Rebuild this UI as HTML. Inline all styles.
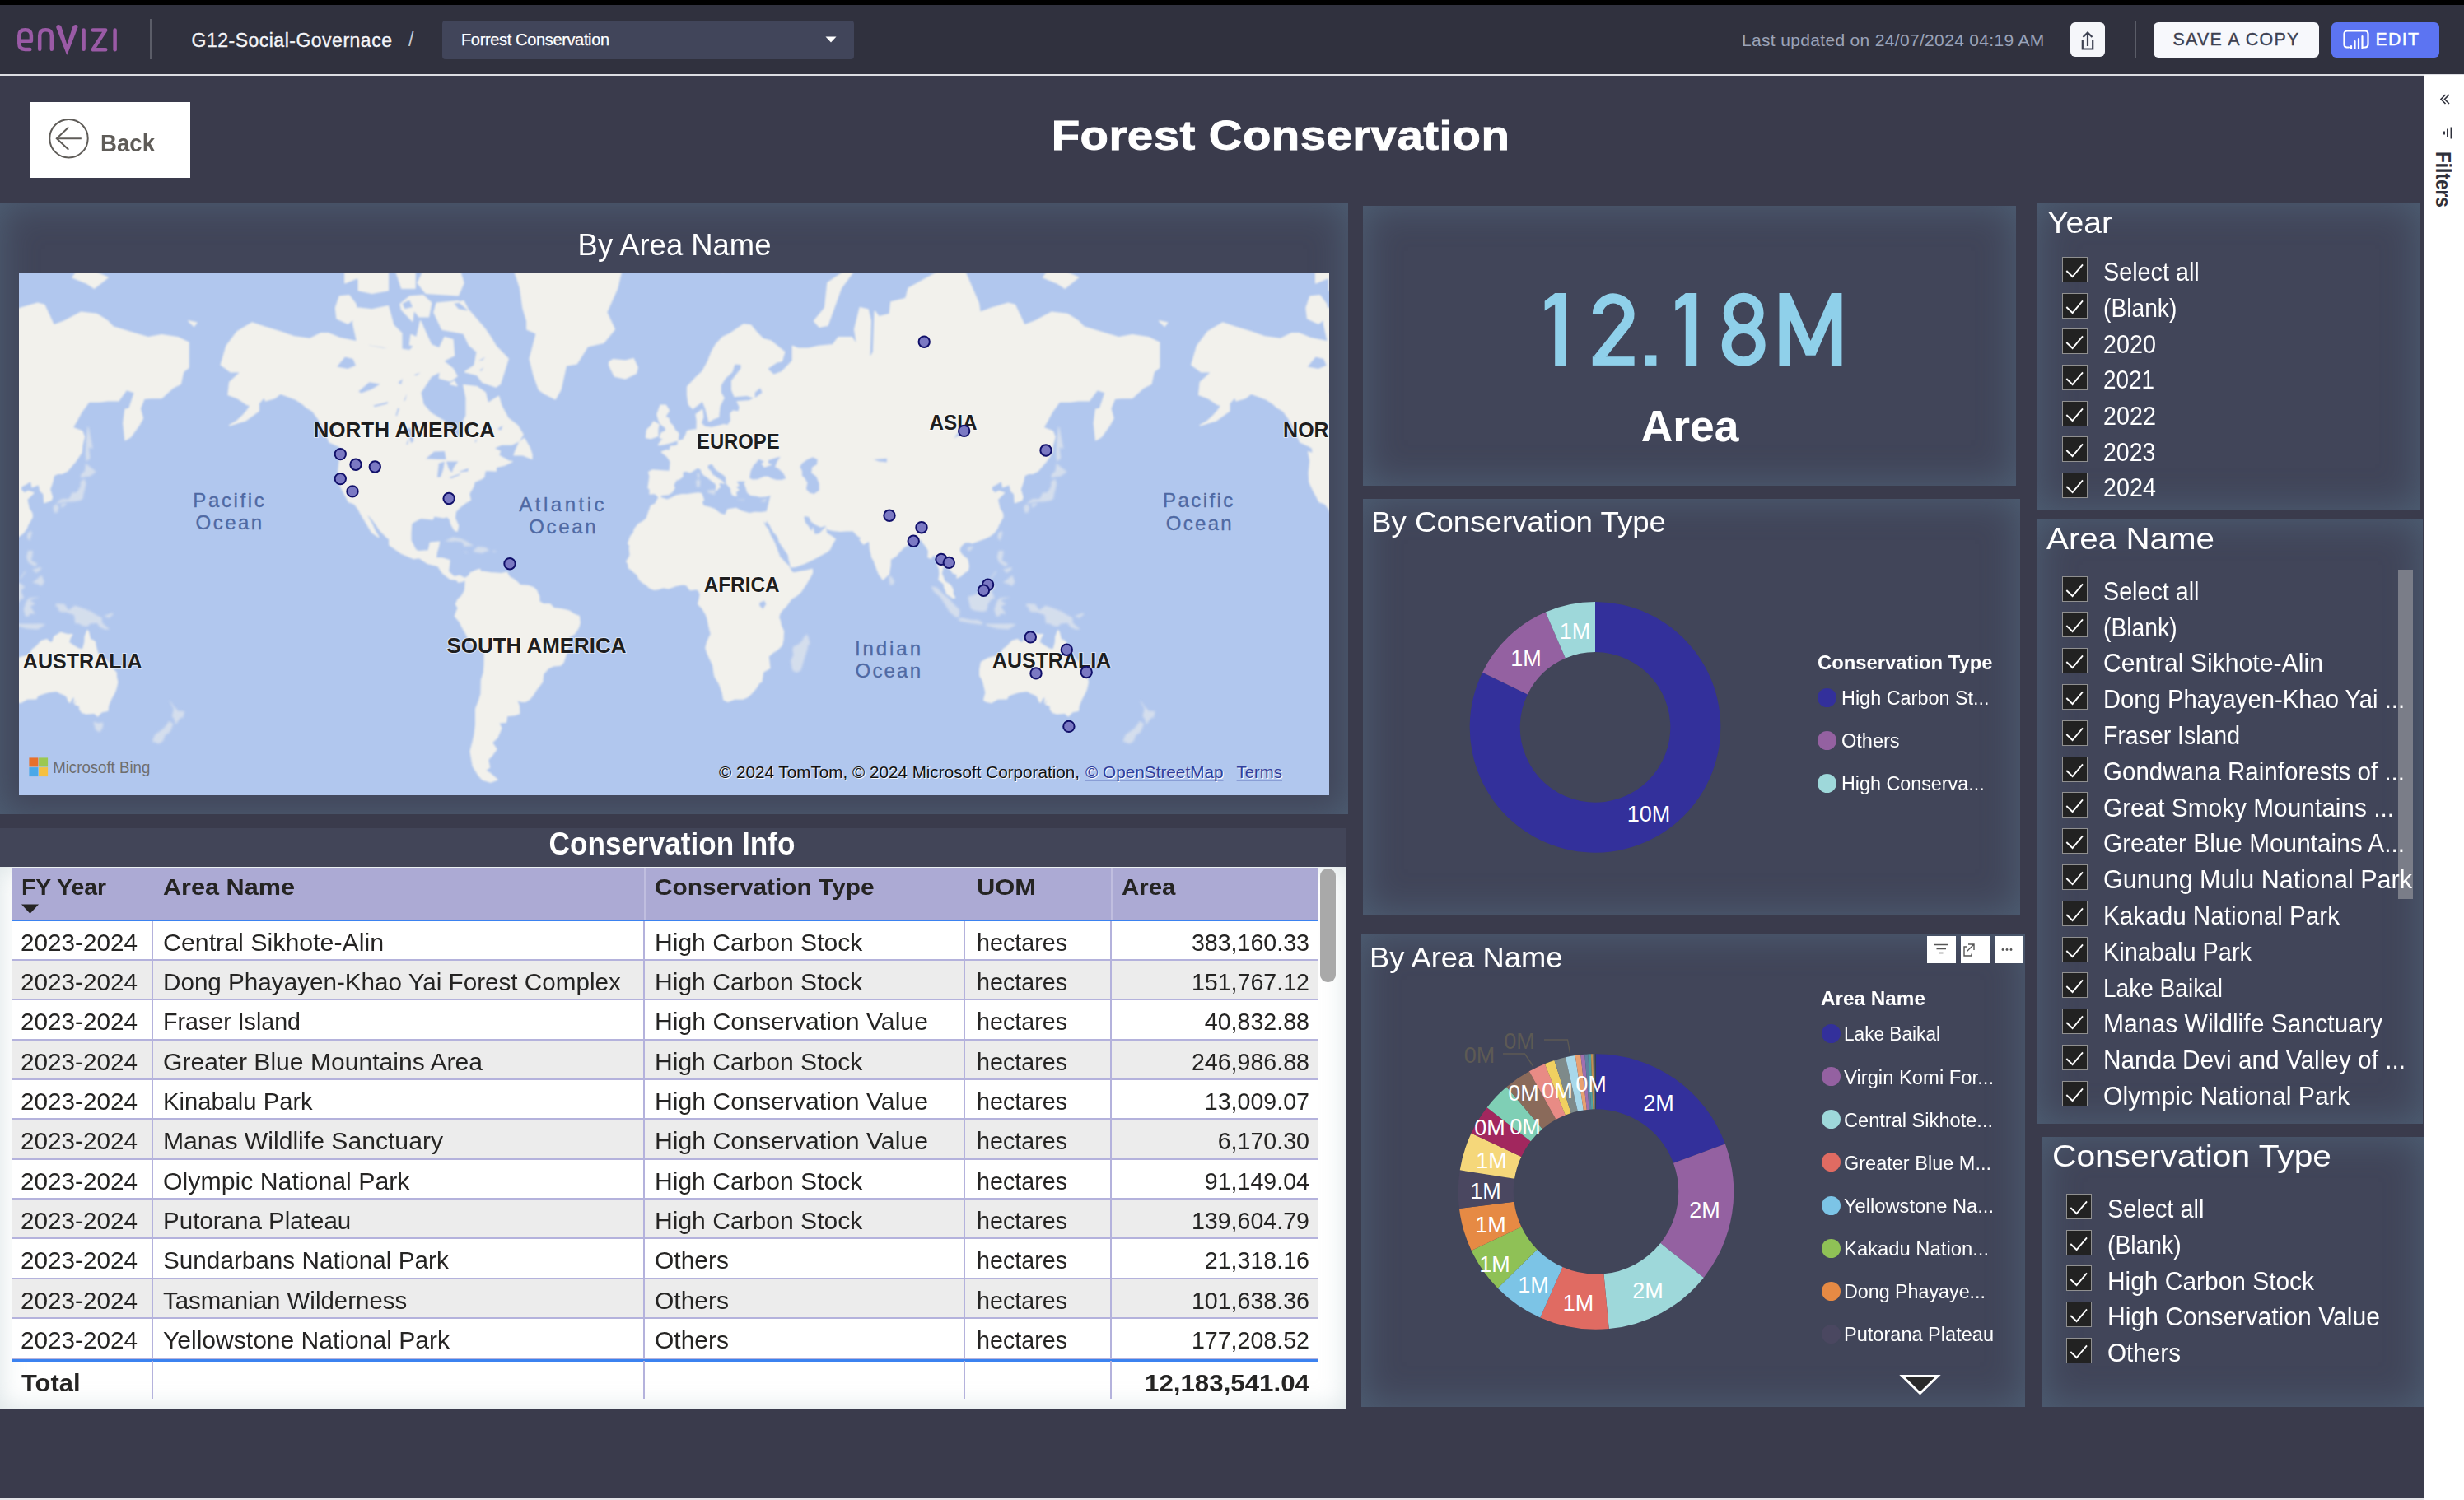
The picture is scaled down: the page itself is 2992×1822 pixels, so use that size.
<!DOCTYPE html>
<html><head><meta charset="utf-8">
<style>
*{box-sizing:border-box;margin:0;padding:0}
html,body{width:2992px;height:1822px;overflow:hidden;background:#3a3b4c;font-family:"Liberation Sans",sans-serif;position:relative}
.a{position:absolute}
.t{position:absolute;white-space:nowrap;line-height:1}
.cb{position:absolute;width:31px;height:31px;background:#222;border:1px solid #909090}

</style></head>
<body>
<div class="a" style="left:0px;top:0px;width:2992px;height:6px;background:#000;"></div>
<div class="a" style="left:0px;top:6px;width:2992px;height:84px;background:#30313e;"></div>
<div class="a" style="left:0px;top:90px;width:2992px;height:1.5px;background:#dcdde2;"></div>
<svg class="a" style="left:0;top:0" width="160" height="90" viewBox="0 0 160 90">
<g fill="none" stroke="#9a5aa6" stroke-width="4.5" stroke-linecap="round" stroke-linejoin="round">
<path d="M23.3,49.8 H37.9 V43.4 Q37.9,36.3 30.8,36.3 H30.4 Q23.3,36.3 23.3,43.4 V52.8 Q23.3,59.9 30.4,59.9 H36.3"/>
<path d="M48.2,59.8 V43.4 Q48.2,36.3 55.3,36.3 H55.7 Q62.8,36.3 62.8,43.4 V59.8"/>
<path d="M101.6,36.6 V59.8"/>
<path d="M112.8,36.6 H128.2 L112.8,60.3 H128.2"/>
<path d="M139.6,36.6 V60.3"/>
</g>
<path fill="#9a5aa6" d="M68.3,33.5 Q68,30 71.2,30 Q73.8,30 74.6,32.5 L81.3,54 L88.2,32.5 Q89,30 91.6,30 Q95,30 94.4,33.5 L81.6,66.6 L81,66.6 Z"/>
</svg>
<div class="a" style="left:182px;top:23px;width:2px;height:49px;background:#5b5d68;"></div>
<div class="t" style="top:37.53px;font-size:23px;color:#f4f5f8;font-weight:400;letter-spacing:0.5px;left:232.50px;-webkit-text-stroke:0.35px #f4f5f8;">G12-Social-Governace</div>
<div class="t" style="top:36.93px;font-size:23px;color:#c8cad2;font-weight:400;left:496.00px;">/</div>
<div class="a" style="left:537px;top:25px;width:500px;height:47px;background:#41455a;border-radius:4px"></div>
<div class="t" style="top:37.77px;font-size:20px;color:#fff;font-weight:400;letter-spacing:-0.35px;left:560.00px;-webkit-text-stroke:0.25px #fff;">Forrest Conservation</div>
<svg class="a" style="left:1000px;top:43px" width="18" height="10"><path d="M2.5,1.5 H15.5 L9,8.5Z" fill="#fff"/></svg>
<div class="t" style="top:37.62px;font-size:21px;color:#9ba3b8;font-weight:400;letter-spacing:0.33px;left:2115.00px;">Last updated on 24/07/2024 04:19 AM</div>
<div class="a" style="left:2514px;top:27px;width:42px;height:42px;background:#f5f6fa;border-radius:6px"></div>
<svg class="a" style="left:2514px;top:27px" width="42" height="42"><g fill="none" stroke="#3d4152" stroke-width="2.2">
<path d="M14.8,22 V32.5 H27.2 V22"/><path d="M21,29 V12.5 M15.5,18 L21,12.5 L26.5,18"/></g></svg>
<div class="a" style="left:2592px;top:26px;width:2px;height:44px;background:#5b5d68;"></div>
<div class="a" style="left:2615px;top:27px;width:201px;height:43px;background:#f7f8fc;border-radius:6px"></div>
<div class="t" style="top:38.28px;font-size:21.4px;color:#3d4152;font-weight:400;letter-spacing:1.3px;left:1715.50px;width:2000px;text-align:center;-webkit-text-stroke:0.35px #3d4152;">SAVE A COPY</div>
<div class="a" style="left:2831px;top:27px;width:131px;height:43px;background:#5c74f2;border-radius:6px"></div>
<svg class="a" style="left:2844px;top:35px" width="36" height="28"><g fill="none" stroke="#fff" stroke-width="2.2" stroke-linecap="round">
<path d="M8,22.5 H5.5 A3.5,3.5 0 0 1 2.5,19 V6 A3.5,3.5 0 0 1 6,2.5 H28 A3.5,3.5 0 0 1 31.5,6 V19 A3.5,3.5 0 0 1 28,22.5 H26"/>
<path d="M11,24 V21 M15.5,24 V15 M20,24 V12 M24.5,24 V9"/></g></svg>
<div class="t" style="top:38.28px;font-size:21.4px;color:#fff;font-weight:400;letter-spacing:1.3px;left:2884.50px;-webkit-text-stroke:0.35px #fff;">EDIT</div>
<div class="a" style="left:2943px;top:91px;width:49px;height:1731px;background:#fff;border-left:1px solid #c9cad0"></div>
<svg class="a" style="left:2943px;top:91px" width="49" height="180"><g fill="none" stroke="#2e303b" stroke-width="1.6">
<path d="M26.5,24 L21,29.5 L26.5,35 M31,24 L25.5,29.5 L31,35"/>
<path d="M33.5,63.5 V77.5 M29,65.5 V75 M25,68.5 V72.5" stroke-width="1.9"/></g></svg>
<div class="t" style="left:2948px;top:184px;font-size:25px;font-weight:700;color:#2e303b;transform-origin:0 0;transform:translate(31px,0) rotate(90deg) scaleX(0.905)">Filters</div>
<div class="a" style="left:0px;top:1820px;width:2943px;height:2px;background:#e4e4e8;"></div>
<div class="a" style="left:37px;top:124px;width:194px;height:92px;background:#fff;"></div>
<svg class="a" style="left:37px;top:124px" width="194" height="92"><g fill="none" stroke="#5f5c58" stroke-width="2">
<circle cx="46.5" cy="44.2" r="23.2"/><path d="M31.8,44.2 H61.8 M46.3,30.6 L31.8,44.2 L46.3,57.8"/></g></svg>
<div class="t" style="top:158.60px;font-size:30px;color:#5f5c58;font-weight:700;left:122.30px;transform:scaleX(0.92);transform-origin:0 0;">Back</div>
<div class="t" style="top:139.88px;font-size:50.7px;color:#fff;font-weight:700;letter-spacing:0.4px;left:555.00px;width:2000px;text-align:center;transform:scaleX(1.112);transform-origin:50% 0;-webkit-text-stroke:0.9px #fff;">Forest Conservation</div>
<div class="a" style="left:0px;top:247px;width:1637px;height:742px;background:#414559;box-shadow:inset 0 0 46px rgba(95,128,150,.48)"></div>
<div class="t" style="top:279.18px;font-size:37px;color:#fff;font-weight:400;left:-180.80px;width:2000px;text-align:center;transform:scaleX(0.9842);transform-origin:50% 0;">By Area Name</div>
<svg class="a" style="left:23px;top:331px" width="1591" height="635" viewBox="0 0 1591 635">
<defs><filter id="bl" x="-2%" y="-2%" width="104%" height="104%"><feGaussianBlur stdDeviation="1.1"/></filter><filter id="bl2" x="-2%" y="-2%" width="104%" height="104%"><feGaussianBlur stdDeviation="1.8"/></filter></defs>
<rect width="1591" height="635" fill="#b1c7ee"/>
<g filter="url(#bl)">
<path d="M-933.3,112.2 L-926.8,89.6 L-913.7,72.0 L-895.7,61.1 L-880.9,66.1 L-861.3,72.0 L-844.9,77.7 L-825.3,80.5 L-812.2,73.9 L-802.4,73.9 L-789.3,79.6 L-766.4,84.2 L-753.3,89.6 L-736.9,92.2 L-720.5,92.2 L-704.2,94.8 L-697.6,87.8 L-691.1,59.0 L-684.5,73.9 L-678.0,87.8 L-668.1,92.2 L-661.6,78.7 L-651.8,81.5 L-650.1,100.8 L-661.6,106.6 L-668.1,120.7 L-678.0,126.0 L-691.1,145.8 L-687.8,160.2 L-678.0,171.3 L-661.6,181.2 L-652.8,194.7 L-641.9,202.1 L-641.9,185.8 L-635.4,174.2 L-635.4,152.4 L-638.7,136.8 L-622.3,138.9 L-612.5,145.8 L-609.2,158.9 L-596.1,150.5 L-592.8,162.0 L-584.7,177.2 L-573.2,185.8 L-566.6,196.8 L-571.6,204.7 L-579.7,208.9 L-592.8,208.9 L-602.7,213.4 L-594.5,216.9 L-596.1,222.3 L-583.0,229.5 L-579.7,229.5 L-589.6,234.2 L-599.4,236.5 L-599.4,241.0 L-612.5,240.1 L-614.1,248.6 L-617.4,250.8 L-625.6,254.2 L-627.2,260.6 L-632.1,268.9 L-630.5,276.2 L-635.4,279.0 L-641.9,283.8 L-648.5,290.7 L-649.5,298.3 L-645.2,307.6 L-646.5,314.2 L-649.5,313.1 L-653.7,305.8 L-655.0,300.2 L-658.3,296.5 L-663.2,297.6 L-674.7,295.7 L-676.3,299.8 L-681.2,299.1 L-691.1,298.3 L-700.9,303.9 L-702.2,305.8 L-702.8,316.7 L-702.8,325.6 L-697.0,337.2 L-692.7,338.9 L-681.2,337.8 L-679.3,328.4 L-668.1,327.4 L-669.8,334.4 L-671.4,339.6 L-672.4,347.1 L-664.9,347.1 L-655.7,349.8 L-656.7,358.2 L-657.3,363.3 L-650.1,369.9 L-643.6,368.3 L-637.0,371.6 L-639.3,374.9 L-645.2,375.9 L-646.9,373.2 L-655.0,372.2 L-664.2,364.9 L-669.8,356.6 L-682.9,353.2 L-692.7,346.4 L-699.2,347.4 L-714.0,341.3 L-728.7,330.9 L-728.7,323.9 L-732.0,321.4 L-740.2,313.1 L-745.1,305.8 L-750.6,298.3 L-759.2,289.6 L-753.3,300.2 L-750.0,305.8 L-746.7,313.1 L-741.8,321.4 L-745.1,319.2 L-750.0,315.6 L-756.5,304.7 L-762.4,294.9 L-766.7,286.9 L-771.3,281.0 L-778.1,278.6 L-782.1,271.0 L-784.4,266.9 L-788.6,258.5 L-790.3,254.7 L-790.9,243.3 L-789.3,228.5 L-791.6,217.9 L-786.0,219.9 L-786.7,213.4 L-792.6,209.9 L-801.7,205.8 L-802.4,203.7 L-810.6,185.8 L-815.5,177.2 L-822.0,168.2 L-830.2,163.3 L-833.5,160.2 L-843.3,153.7 L-861.3,147.1 L-867.9,152.4 L-879.3,155.7 L-880.9,149.1 L-874.4,144.4 L-887.5,158.9 L-887.5,168.2 L-895.7,174.2 L-903.9,180.1 L-910.4,181.8 L-922.9,185.8 L-913.7,180.1 L-907.1,174.2 L-900.6,166.4 L-897.3,161.4 L-902.2,160.2 L-913.7,152.4 L-924.5,148.5 L-922.9,133.3 L-910.4,122.2 L-910.4,120.7 L-921.9,120.7 L-926.8,116.9 L-933.3,112.2Z M245.3,112.2 L251.9,89.6 L265.0,72.0 L283.0,61.1 L297.7,66.1 L317.3,72.0 L333.7,77.7 L353.3,80.5 L366.4,73.9 L376.3,73.9 L389.4,79.6 L412.3,84.2 L425.4,89.6 L441.7,92.2 L458.1,92.2 L474.5,94.8 L481.0,87.8 L487.6,59.0 L494.1,73.9 L500.7,87.8 L510.5,92.2 L517.0,78.7 L526.9,81.5 L528.5,100.8 L517.0,106.6 L510.5,120.7 L500.7,126.0 L487.6,145.8 L490.9,160.2 L500.7,171.3 L517.0,181.2 L525.9,194.7 L536.7,202.1 L536.7,185.8 L543.2,174.2 L543.2,152.4 L540.0,136.8 L556.3,138.9 L566.2,145.8 L569.4,158.9 L582.5,150.5 L585.8,162.0 L594.0,177.2 L605.4,185.8 L612.0,196.8 L607.1,204.7 L598.9,208.9 L585.8,208.9 L576.0,213.4 L584.2,216.9 L582.5,222.3 L595.6,229.5 L598.9,229.5 L589.1,234.2 L579.3,236.5 L579.3,241.0 L566.2,240.1 L564.5,248.6 L561.2,250.8 L553.1,254.2 L551.4,260.6 L546.5,268.9 L548.2,276.2 L543.2,279.0 L536.7,283.8 L530.1,290.7 L529.2,298.3 L533.4,307.6 L532.1,314.2 L529.2,313.1 L524.9,305.8 L523.6,300.2 L520.3,296.5 L515.4,297.6 L504.0,295.7 L502.3,299.8 L497.4,299.1 L487.6,298.3 L477.8,303.9 L476.5,305.8 L475.8,316.7 L475.8,325.6 L481.7,337.2 L485.9,338.9 L497.4,337.8 L499.4,328.4 L510.5,327.4 L508.9,334.4 L507.2,339.6 L506.2,347.1 L513.8,347.1 L522.9,349.8 L522.0,358.2 L521.3,363.3 L528.5,369.9 L535.1,368.3 L541.6,371.6 L539.3,374.9 L533.4,375.9 L531.8,373.2 L523.6,372.2 L514.4,364.9 L508.9,356.6 L495.8,353.2 L485.9,346.4 L479.4,347.4 L464.7,341.3 L449.9,330.9 L449.9,323.9 L446.7,321.4 L438.5,313.1 L433.6,305.8 L428.0,298.3 L419.5,289.6 L425.4,300.2 L428.7,305.8 L431.9,313.1 L436.8,321.4 L433.6,319.2 L428.7,315.6 L422.1,304.7 L416.2,294.9 L412.0,286.9 L407.4,281.0 L400.5,278.6 L396.6,271.0 L394.3,266.9 L390.0,258.5 L388.4,254.7 L387.7,243.3 L389.4,228.5 L387.1,217.9 L392.6,219.9 L392.0,213.4 L386.1,209.9 L376.9,205.8 L376.3,203.7 L368.1,185.8 L363.2,177.2 L356.6,168.2 L348.4,163.3 L345.2,160.2 L335.3,153.7 L317.3,147.1 L310.8,152.4 L299.3,155.7 L297.7,149.1 L304.2,144.4 L291.1,158.9 L291.1,168.2 L283.0,174.2 L274.8,180.1 L268.2,181.8 L255.8,185.8 L265.0,180.1 L271.5,174.2 L278.0,166.4 L281.3,161.4 L276.4,160.2 L265.0,152.4 L254.1,148.5 L255.8,133.3 L268.2,122.2 L268.2,120.7 L256.8,120.7 L251.9,116.9 L245.3,112.2Z M1423.9,112.2 L1430.5,89.6 L1443.6,72.0 L1461.6,61.1 L1476.3,66.1 L1496.0,72.0 L1512.3,77.7 L1532.0,80.5 L1545.1,73.9 L1554.9,73.9 L1568.0,79.6 L1590.9,84.2 L1604.0,89.6 L1620.4,92.2 L1636.8,92.2 L1653.1,94.8 L1659.7,87.8 L1666.2,59.0 L1672.8,73.9 L1679.3,87.8 L1689.1,92.2 L1695.7,78.7 L1705.5,81.5 L1707.1,100.8 L1695.7,106.6 L1689.1,120.7 L1679.3,126.0 L1666.2,145.8 L1669.5,160.2 L1679.3,171.3 L1695.7,181.2 L1704.5,194.7 L1715.3,202.1 L1715.3,185.8 L1721.9,174.2 L1721.9,152.4 L1718.6,136.8 L1735.0,138.9 L1744.8,145.8 L1748.1,158.9 L1761.2,150.5 L1764.4,162.0 L1772.6,177.2 L1784.1,185.8 L1790.6,196.8 L1785.7,204.7 L1777.5,208.9 L1764.4,208.9 L1754.6,213.4 L1762.8,216.9 L1761.2,222.3 L1774.3,229.5 L1777.5,229.5 L1767.7,234.2 L1757.9,236.5 L1757.9,241.0 L1744.8,240.1 L1743.2,248.6 L1739.9,250.8 L1731.7,254.2 L1730.1,260.6 L1725.2,268.9 L1726.8,276.2 L1721.9,279.0 L1715.3,283.8 L1708.8,290.7 L1707.8,298.3 L1712.1,307.6 L1710.7,314.2 L1707.8,313.1 L1703.5,305.8 L1702.2,300.2 L1699.0,296.5 L1694.1,297.6 L1682.6,295.7 L1681.0,299.8 L1676.0,299.1 L1666.2,298.3 L1656.4,303.9 L1655.1,305.8 L1654.4,316.7 L1654.4,325.6 L1660.3,337.2 L1664.6,338.9 L1676.0,337.8 L1678.0,328.4 L1689.1,327.4 L1687.5,334.4 L1685.9,339.6 L1684.9,347.1 L1692.4,347.1 L1701.6,349.8 L1700.6,358.2 L1699.9,363.3 L1707.1,369.9 L1713.7,368.3 L1720.2,371.6 L1718.0,374.9 L1712.1,375.9 L1710.4,373.2 L1702.2,372.2 L1693.1,364.9 L1687.5,356.6 L1674.4,353.2 L1664.6,346.4 L1658.0,347.4 L1643.3,341.3 L1628.6,330.9 L1628.6,323.9 L1625.3,321.4 L1617.1,313.1 L1612.2,305.8 L1606.6,298.3 L1598.1,289.6 L1604.0,300.2 L1607.3,305.8 L1610.6,313.1 L1615.5,321.4 L1612.2,319.2 L1607.3,315.6 L1600.7,304.7 L1594.8,294.9 L1590.6,286.9 L1586.0,281.0 L1579.1,278.6 L1575.2,271.0 L1572.9,266.9 L1568.7,258.5 L1567.0,254.7 L1566.4,243.3 L1568.0,228.5 L1565.7,217.9 L1571.3,219.9 L1570.6,213.4 L1564.7,209.9 L1555.6,205.8 L1554.9,203.7 L1546.7,185.8 L1541.8,177.2 L1535.3,168.2 L1527.1,163.3 L1523.8,160.2 L1514.0,153.7 L1496.0,147.1 L1489.4,152.4 L1478.0,155.7 L1476.3,149.1 L1482.9,144.4 L1469.8,158.9 L1469.8,168.2 L1461.6,174.2 L1453.4,180.1 L1446.9,181.8 L1434.4,185.8 L1443.6,180.1 L1450.1,174.2 L1456.7,166.4 L1460.0,161.4 L1455.1,160.2 L1443.6,152.4 L1432.8,148.5 L1434.4,133.3 L1446.9,122.2 L1446.9,120.7 L1435.4,120.7 L1430.5,116.9 L1423.9,112.2Z M-714.0,45.1 L-700.9,59.0 L-699.2,42.9 L-704.2,32.6 L-715.6,38.4Z M464.7,45.1 L477.8,59.0 L479.4,42.9 L474.5,32.6 L463.0,38.4Z M1643.3,45.1 L1656.4,59.0 L1658.0,42.9 L1653.1,32.6 L1641.7,38.4Z M-704.2,87.8 L-697.6,89.6 L-696.0,78.7 L-702.5,75.8Z M474.5,87.8 L481.0,89.6 L482.7,78.7 L476.1,75.8Z M1653.1,87.8 L1659.7,89.6 L1661.3,78.7 L1654.8,75.8Z M-645.2,0.6 L-678.0,1.9 L-700.9,-8.0 L-678.0,-57.5 L-628.9,-57.5Z M533.4,0.6 L500.7,1.9 L477.8,-8.0 L500.7,-57.5 L549.8,-57.5Z M1712.1,0.6 L1679.3,1.9 L1656.4,-8.0 L1679.3,-57.5 L1728.4,-57.5Z M-694.3,-31.2 L-671.4,-23.1 L-661.6,-57.5 L-694.3,-77.4Z M484.3,-31.2 L507.2,-23.1 L517.0,-57.5 L484.3,-77.4Z M1662.9,-31.2 L1685.9,-23.1 L1695.7,-57.5 L1662.9,-77.4Z M-736.9,-15.4 L-750.0,-16.9 L-727.1,-31.2Z M441.7,-15.4 L428.7,-16.9 L451.6,-31.2Z M1620.4,-15.4 L1607.3,-16.9 L1630.2,-31.2Z M-759.8,3.3 L-782.7,12.7 L-782.7,-8.0 L-759.8,-15.4Z M418.8,3.3 L395.9,12.7 L395.9,-8.0 L418.8,-15.4Z M1597.5,3.3 L1574.6,12.7 L1574.6,-8.0 L1597.5,-15.4Z M-645.2,45.1 L-632.1,47.3 L-638.7,34.9 L-651.8,37.2Z M533.4,45.1 L546.5,47.3 L540.0,34.9 L526.9,37.2Z M1712.1,45.1 L1725.2,47.3 L1718.6,34.9 L1705.5,37.2Z M-655.0,135.4 L-646.9,137.5 L-650.1,131.8Z M523.6,135.4 L531.8,137.5 L528.5,131.8Z M1702.2,135.4 L1710.4,137.5 L1707.1,131.8Z M-584.7,104.9 L-589.6,120.7 L-594.5,135.4 L-599.4,138.9 L-615.8,133.3 L-622.3,124.5 L-637.0,120.7 L-625.6,113.0 L-622.3,96.5 L-632.1,87.8 L-638.7,73.9 L-664.9,69.1 L-674.7,48.4 L-671.4,37.2 L-645.2,34.9 L-632.1,46.2 L-612.5,69.1 L-605.9,78.7 L-599.4,89.6Z M594.0,104.9 L589.1,120.7 L584.2,135.4 L579.3,138.9 L562.9,133.3 L556.3,124.5 L541.6,120.7 L553.1,113.0 L556.3,96.5 L546.5,87.8 L540.0,73.9 L513.8,69.1 L504.0,48.4 L507.2,37.2 L533.4,34.9 L546.5,46.2 L566.2,69.1 L572.7,78.7 L579.3,89.6Z M1772.6,104.9 L1767.7,120.7 L1762.8,135.4 L1757.9,138.9 L1741.5,133.3 L1735.0,124.5 L1720.2,120.7 L1731.7,113.0 L1735.0,96.5 L1725.2,87.8 L1718.6,73.9 L1692.4,69.1 L1682.6,48.4 L1685.9,37.2 L1712.1,34.9 L1725.2,46.2 L1744.8,69.1 L1751.3,78.7 L1757.9,89.6Z M-768.0,83.3 L-753.3,87.8 L-733.6,90.5 L-714.0,92.2 L-714.0,73.9 L-723.8,64.1 L-730.3,40.7 L-750.0,45.1 L-769.6,42.9 L-772.9,62.1Z M410.6,83.3 L425.4,87.8 L445.0,90.5 L464.7,92.2 L464.7,73.9 L454.8,64.1 L448.3,40.7 L428.7,45.1 L409.0,42.9 L405.7,62.1Z M1589.3,83.3 L1604.0,87.8 L1623.7,90.5 L1643.3,92.2 L1643.3,73.9 L1633.5,64.1 L1626.9,40.7 L1607.3,45.1 L1587.6,42.9 L1584.4,62.1Z M-792.6,55.9 L-779.5,62.1 L-768.0,53.8 L-769.6,38.4 L-777.8,27.8 L-789.3,29.0 L-794.2,42.9Z M386.1,55.9 L399.2,62.1 L410.6,53.8 L409.0,38.4 L400.8,27.8 L389.4,29.0 L384.5,42.9Z M1564.7,55.9 L1577.8,62.1 L1589.3,53.8 L1587.6,38.4 L1579.5,27.8 L1568.0,29.0 L1563.1,42.9Z M-681.2,53.8 L-692.7,53.8 L-700.9,42.9 L-710.7,45.1 L-714.0,37.2 L-704.2,29.0 L-687.8,27.8 L-678.0,37.2Z M497.4,53.8 L485.9,53.8 L477.8,42.9 L467.9,45.1 L464.7,37.2 L474.5,29.0 L490.9,27.8 L500.7,37.2Z M1676.0,53.8 L1664.6,53.8 L1656.4,42.9 L1646.6,45.1 L1643.3,37.2 L1653.1,29.0 L1669.5,27.8 L1679.3,37.2Z M-645.2,27.8 L-684.5,25.3 L-694.3,12.7 L-684.5,-8.0 L-645.2,-8.0 L-638.7,12.7Z M533.4,27.8 L494.1,25.3 L484.3,12.7 L494.1,-8.0 L533.4,-8.0 L540.0,12.7Z M1712.1,27.8 L1672.8,25.3 L1662.9,12.7 L1672.8,-8.0 L1712.1,-8.0 L1718.6,12.7Z M-730.3,21.6 L-750.0,25.3 L-766.4,21.6 L-766.4,-0.8 L-730.3,-0.8Z M448.3,21.6 L428.7,25.3 L412.3,21.6 L412.3,-0.8 L448.3,-0.8Z M1626.9,21.6 L1607.3,25.3 L1590.9,21.6 L1590.9,-0.8 L1626.9,-0.8Z M-697.6,19.1 L-714.0,19.1 L-720.5,-0.8 L-697.6,-0.8Z M481.0,19.1 L464.7,19.1 L458.1,-0.8 L481.0,-0.8Z M1659.7,19.1 L1643.3,19.1 L1636.8,-0.8 L1659.7,-0.8Z M-646.9,126.0 L-655.0,131.8 L-668.1,128.2 L-666.5,116.9 L-661.6,109.0 L-651.8,116.9Z M531.8,126.0 L523.6,131.8 L510.5,128.2 L512.1,116.9 L517.0,109.0 L526.9,116.9Z M1710.4,126.0 L1702.2,131.8 L1689.1,128.2 L1690.8,116.9 L1695.7,109.0 L1705.5,116.9Z M-527.4,153.7 L-520.8,142.4 L-514.3,113.0 L-501.2,110.6 L-488.1,89.6 L-468.4,85.1 L-455.3,69.1 L-465.2,48.4 L-452.1,19.1 L-442.2,-23.1 L-573.2,-23.1 L-576.5,-0.8 L-569.9,19.1 L-566.6,42.9 L-561.7,59.0 L-561.7,69.1 L-550.3,73.9 L-558.5,104.9 L-553.5,124.5 L-547.0,142.4 L-540.5,147.1Z M651.3,153.7 L657.8,142.4 L664.4,113.0 L677.5,110.6 L690.6,89.6 L710.2,85.1 L723.3,69.1 L713.5,48.4 L726.6,19.1 L736.4,-23.1 L605.4,-23.1 L602.2,-0.8 L608.7,19.1 L612.0,42.9 L616.9,59.0 L616.9,69.1 L628.4,73.9 L620.2,104.9 L625.1,124.5 L631.6,142.4 L638.2,147.1Z M1829.9,153.7 L1836.5,142.4 L1843.0,113.0 L1856.1,110.6 L1869.2,89.6 L1888.9,85.1 L1902.0,69.1 L1892.1,48.4 L1905.2,19.1 L1915.0,-23.1 L1784.1,-23.1 L1780.8,-0.8 L1787.4,19.1 L1790.6,42.9 L1795.5,59.0 L1795.5,69.1 L1807.0,73.9 L1798.8,104.9 L1803.7,124.5 L1810.3,142.4 L1816.8,147.1Z M-577.4,221.8 L-566.6,221.8 L-555.8,226.2 L-555.8,220.9 L-558.8,212.4 L-565.0,201.6 L-570.9,206.3 L-574.8,214.9Z M601.2,221.8 L612.0,221.8 L622.8,226.2 L622.8,220.9 L619.9,212.4 L613.6,201.6 L607.7,206.3 L603.8,214.9Z M1779.8,221.8 L1790.6,221.8 L1801.4,226.2 L1801.4,220.9 L1798.5,212.4 L1792.3,201.6 L1786.4,206.3 L1782.5,214.9Z M-461.9,113.0 L-455.3,126.0 L-442.2,128.9 L-429.1,122.2 L-427.5,115.3 L-432.4,104.9 L-442.2,107.4 L-457.0,105.7 L-461.9,109.0Z M716.8,113.0 L723.3,126.0 L736.4,128.9 L749.5,122.2 L751.1,115.3 L746.2,104.9 L736.4,107.4 L721.7,105.7 L716.8,109.0Z M1895.4,113.0 L1902.0,126.0 L1915.0,128.9 L1928.1,122.2 L1929.8,115.3 L1924.9,104.9 L1915.0,107.4 L1900.3,105.7 L1895.4,109.0Z M-637.0,371.6 L-632.1,368.3 L-630.5,364.9 L-622.3,361.6 L-619.0,360.6 L-617.4,364.9 L-615.8,363.3 L-605.9,364.9 L-592.8,365.9 L-586.3,364.3 L-583.0,369.9 L-579.7,371.6 L-573.2,376.5 L-569.9,379.8 L-560.1,380.5 L-553.5,383.1 L-550.3,386.4 L-547.0,393.6 L-547.0,399.5 L-542.1,402.8 L-533.9,402.8 L-529.0,407.7 L-519.2,409.0 L-511.0,411.0 L-504.4,415.2 L-498.5,417.5 L-497.6,425.8 L-499.5,431.7 L-504.4,439.1 L-510.3,442.4 L-511.0,449.2 L-513.0,459.4 L-515.9,468.1 L-517.5,473.4 L-520.8,476.9 L-529.0,477.6 L-535.5,480.5 L-542.1,487.7 L-543.1,496.9 L-548.6,504.4 L-550.3,506.3 L-555.2,514.1 L-558.5,518.0 L-563.4,521.2 L-568.3,521.2 L-574.5,518.8 L-571.6,526.0 L-570.9,535.4 L-576.5,537.5 L-586.3,538.4 L-587.3,546.1 L-596.1,546.9 L-592.8,553.5 L-597.7,564.8 L-604.3,570.9 L-598.7,579.1 L-604.3,586.6 L-609.2,591.7 L-607.2,601.1 L-612.5,604.9 L-607.6,607.6 L-597.7,616.0 L-605.9,618.9 L-615.8,616.0 L-620.7,610.4 L-627.2,599.5 L-630.5,581.6 L-627.2,569.5 L-625.6,562.5 L-623.9,549.1 L-623.9,530.1 L-620.7,522.0 L-617.4,512.1 L-617.1,495.1 L-614.1,485.9 L-613.5,476.9 L-613.1,461.2 L-619.0,456.0 L-628.9,450.9 L-632.8,445.1 L-635.4,439.1 L-640.3,430.7 L-643.6,424.1 L-649.1,417.5 L-646.9,411.0 L-645.2,407.7 L-648.2,402.8 L-645.2,396.9 L-641.3,393.6 L-637.0,386.4 L-636.4,376.5Z M541.6,371.6 L546.5,368.3 L548.2,364.9 L556.3,361.6 L559.6,360.6 L561.2,364.9 L562.9,363.3 L572.7,364.9 L585.8,365.9 L592.4,364.3 L595.6,369.9 L598.9,371.6 L605.4,376.5 L608.7,379.8 L618.5,380.5 L625.1,383.1 L628.4,386.4 L631.6,393.6 L631.6,399.5 L636.5,402.8 L644.7,402.8 L649.6,407.7 L659.5,409.0 L667.7,411.0 L674.2,415.2 L680.1,417.5 L681.1,425.8 L679.1,431.7 L674.2,439.1 L668.3,442.4 L667.7,449.2 L665.7,459.4 L662.7,468.1 L661.1,473.4 L657.8,476.9 L649.6,477.6 L643.1,480.5 L636.5,487.7 L635.6,496.9 L630.0,504.4 L628.4,506.3 L623.5,514.1 L620.2,518.0 L615.3,521.2 L610.4,521.2 L604.1,518.8 L607.1,526.0 L607.7,535.4 L602.2,537.5 L592.4,538.4 L591.4,546.1 L582.5,546.9 L585.8,553.5 L580.9,564.8 L574.3,570.9 L579.9,579.1 L574.3,586.6 L569.4,591.7 L571.4,601.1 L566.2,604.9 L571.1,607.6 L580.9,616.0 L572.7,618.9 L562.9,616.0 L558.0,610.4 L551.4,599.5 L548.2,581.6 L551.4,569.5 L553.1,562.5 L554.7,549.1 L554.7,530.1 L558.0,522.0 L561.2,512.1 L561.6,495.1 L564.5,485.9 L565.2,476.9 L565.5,461.2 L559.6,456.0 L549.8,450.9 L545.9,445.1 L543.2,439.1 L538.3,430.7 L535.1,424.1 L529.5,417.5 L531.8,411.0 L533.4,407.7 L530.5,402.8 L533.4,396.9 L537.3,393.6 L541.6,386.4 L542.3,376.5Z M1720.2,371.6 L1725.2,368.3 L1726.8,364.9 L1735.0,361.6 L1738.3,360.6 L1739.9,364.9 L1741.5,363.3 L1751.3,364.9 L1764.4,365.9 L1771.0,364.3 L1774.3,369.9 L1777.5,371.6 L1784.1,376.5 L1787.4,379.8 L1797.2,380.5 L1803.7,383.1 L1807.0,386.4 L1810.3,393.6 L1810.3,399.5 L1815.2,402.8 L1823.4,402.8 L1828.3,407.7 L1838.1,409.0 L1846.3,411.0 L1852.8,415.2 L1858.7,417.5 L1859.7,425.8 L1857.8,431.7 L1852.8,439.1 L1846.9,442.4 L1846.3,449.2 L1844.3,459.4 L1841.4,468.1 L1839.7,473.4 L1836.5,476.9 L1828.3,477.6 L1821.7,480.5 L1815.2,487.7 L1814.2,496.9 L1808.6,504.4 L1807.0,506.3 L1802.1,514.1 L1798.8,518.0 L1793.9,521.2 L1789.0,521.2 L1782.8,518.8 L1785.7,526.0 L1786.4,535.4 L1780.8,537.5 L1771.0,538.4 L1770.0,546.1 L1761.2,546.9 L1764.4,553.5 L1759.5,564.8 L1753.0,570.9 L1758.5,579.1 L1753.0,586.6 L1748.1,591.7 L1750.0,601.1 L1744.8,604.9 L1749.7,607.6 L1759.5,616.0 L1751.3,618.9 L1741.5,616.0 L1736.6,610.4 L1730.1,599.5 L1726.8,581.6 L1730.1,569.5 L1731.7,562.5 L1733.3,549.1 L1733.3,530.1 L1736.6,522.0 L1739.9,512.1 L1740.2,495.1 L1743.2,485.9 L1743.8,476.9 L1744.1,461.2 L1738.3,456.0 L1728.4,450.9 L1724.5,445.1 L1721.9,439.1 L1717.0,430.7 L1713.7,424.1 L1708.1,417.5 L1710.4,411.0 L1712.1,407.7 L1709.1,402.8 L1712.1,396.9 L1716.0,393.6 L1720.2,386.4 L1720.9,376.5Z M-414.4,261.5 L-412.4,247.7 L-413.7,242.4 L-409.5,240.1 L-396.4,241.0 L-388.2,241.5 L-387.2,229.5 L-391.5,223.3 L-398.4,217.9 L-393.1,215.9 L-388.2,216.4 L-387.2,211.4 L-381.7,210.9 L-378.4,209.4 L-378.1,204.7 L-371.8,203.2 L-368.6,196.8 L-366.9,192.5 L-360.4,191.4 L-355.5,190.8 L-355.1,180.1 L-356.5,172.5 L-348.9,167.0 L-347.9,175.4 L-350.6,183.0 L-345.7,187.5 L-337.5,188.6 L-330.9,186.9 L-322.7,184.7 L-317.8,185.8 L-313.9,180.1 L-314.5,171.3 L-311.3,168.2 L-304.7,169.4 L-303.1,163.3 L-306.4,157.0 L-291.6,155.7 L-285.1,152.4 L-294.9,149.1 L-309.6,150.5 L-312.9,142.4 L-312.9,131.8 L-301.5,116.9 L-301.5,111.4 L-309.6,110.6 L-312.9,120.7 L-321.1,128.2 L-326.7,136.8 L-326.7,145.8 L-322.7,152.4 L-327.6,162.0 L-329.3,175.4 L-334.2,177.2 L-340.7,180.7 L-342.4,174.2 L-344.7,165.2 L-347.3,158.9 L-348.9,155.7 L-352.2,158.9 L-360.4,165.2 L-365.3,160.2 L-366.9,149.1 L-366.9,138.9 L-357.1,128.2 L-348.9,120.7 L-342.4,109.0 L-337.5,96.5 L-332.6,87.8 L-324.4,78.7 L-314.5,73.9 L-298.8,63.1 L-290.0,64.1 L-281.8,73.9 L-275.3,80.5 L-265.4,83.3 L-249.1,96.5 L-252.3,107.4 L-258.9,109.0 L-270.3,116.9 L-262.2,124.5 L-252.3,120.7 L-239.2,107.4 L-239.2,89.6 L-232.7,92.2 L-219.6,92.2 L-208.1,89.6 L-190.1,87.8 L-183.6,78.7 L-167.2,78.7 L-160.7,88.7 L-163.9,69.1 L-157.4,42.9 L-147.6,45.1 L-144.3,59.0 L-145.9,104.9 L-141.0,96.5 L-139.4,47.3 L-134.5,53.8 L-121.4,50.6 L-119.7,36.1 L-101.7,31.4 L-98.5,19.1 L-62.4,-0.8 L-39.5,-23.1 L-13.3,37.2 L-11.7,48.4 L3.0,42.9 L22.7,37.2 L30.9,39.5 L42.3,64.1 L55.4,59.0 L75.1,48.4 L94.7,50.6 L107.8,59.0 L114.3,66.1 L140.5,73.9 L156.9,78.7 L173.3,75.8 L192.9,78.7 L206.0,85.1 L206.0,115.3 L199.5,120.7 L196.2,135.4 L186.4,140.3 L173.3,152.4 L160.2,152.4 L152.0,153.1 L147.1,165.2 L150.4,177.2 L145.5,185.8 L135.6,199.5 L129.1,203.7 L126.8,183.0 L129.1,166.4 L134.0,165.2 L140.5,145.8 L130.7,142.4 L120.9,155.7 L107.8,155.7 L98.0,157.0 L84.9,157.0 L76.7,168.2 L65.2,188.6 L76.7,193.0 L79.3,199.5 L76.7,209.9 L76.0,218.4 L68.5,229.5 L58.7,241.0 L52.1,244.2 L47.2,244.2 L42.3,246.4 L40.7,254.2 L37.4,263.6 L40.4,273.0 L39.0,276.6 L30.9,279.4 L30.2,268.9 L26.3,265.6 L24.3,257.2 L16.1,260.6 L14.5,252.9 L9.6,256.4 L3.0,259.8 L2.0,263.6 L6.3,268.1 L11.2,265.6 L17.8,267.7 L9.6,275.8 L12.2,286.9 L15.8,292.7 L16.1,297.2 L11.2,305.8 L8.9,311.3 L4.7,316.7 L-0.2,320.3 L-6.8,323.2 L-11.7,324.9 L-18.3,327.4 L-21.5,328.4 L-23.8,327.4 L-29.7,327.4 L-34.6,331.9 L-36.9,336.8 L-34.6,342.0 L-29.7,346.4 L-27.1,348.5 L-25.5,356.6 L-26.4,361.6 L-31.3,364.9 L-34.6,368.3 L-39.5,370.9 L-39.5,366.6 L-44.4,364.9 L-47.7,359.9 L-53.0,357.6 L-55.9,354.9 L-58.5,365.9 L-56.6,369.9 L-54.6,375.5 L-51.6,377.2 L-47.7,379.8 L-44.8,384.8 L-44.4,391.3 L-42.2,394.9 L-44.4,395.2 L-51.6,390.3 L-54.9,381.5 L-55.2,378.2 L-61.5,373.2 L-60.5,366.6 L-60.8,359.9 L-62.4,356.6 L-63.8,344.7 L-69.0,343.0 L-71.3,347.1 L-74.6,345.7 L-73.9,337.8 L-77.2,332.6 L-81.1,327.4 L-82.7,323.9 L-87.0,325.6 L-91.9,326.7 L-93.6,326.3 L-99.1,330.5 L-105.0,334.4 L-109.9,339.6 L-113.9,344.4 L-118.1,347.1 L-120.4,348.1 L-120.7,356.6 L-122.0,363.3 L-122.0,365.6 L-126.3,369.9 L-129.6,372.9 L-133.5,367.3 L-136.1,361.6 L-137.8,357.2 L-140.4,349.8 L-142.7,346.4 L-145.0,336.1 L-145.6,328.1 L-145.9,325.6 L-153.1,329.8 L-157.4,324.2 L-154.1,322.8 L-159.0,320.3 L-163.0,316.7 L-165.6,313.5 L-173.8,313.8 L-181.6,314.2 L-190.1,313.1 L-195.7,312.0 L-199.0,306.9 L-204.9,308.7 L-211.1,305.8 L-216.3,302.1 L-218.6,296.5 L-224.5,295.3 L-226.1,296.5 L-224.5,303.9 L-219.6,309.5 L-218.0,313.1 L-214.4,314.9 L-214.7,310.6 L-213.1,318.5 L-206.5,317.8 L-199.0,309.8 L-198.3,316.7 L-193.4,319.6 L-187.5,323.9 L-191.8,330.9 L-194.1,336.1 L-198.3,339.6 L-203.2,342.3 L-212.4,347.4 L-224.5,353.2 L-236.0,357.2 L-240.9,357.6 L-243.5,348.1 L-244.2,343.0 L-249.1,336.1 L-255.0,327.4 L-257.3,320.3 L-262.2,314.9 L-267.1,305.8 L-268.7,303.9 L-270.3,298.3 L-272.0,303.9 L-275.3,300.2 L-276.6,296.8 L-277.6,291.9 L-270.3,290.7 L-268.7,284.9 L-266.1,273.8 L-264.8,269.8 L-272.0,271.8 L-278.5,272.2 L-283.4,271.0 L-290.0,270.2 L-293.9,266.9 L-294.9,262.7 L-296.5,258.5 L-297.5,256.4 L-294.9,254.2 L-288.4,251.2 L-293.3,254.2 L-296.5,253.8 L-298.2,252.9 L-304.7,252.9 L-308.0,254.2 L-304.7,258.5 L-308.7,260.6 L-304.7,264.0 L-308.7,266.9 L-307.3,271.0 L-309.6,271.0 L-312.3,269.8 L-313.9,265.6 L-313.6,263.1 L-317.2,258.5 L-319.5,256.4 L-319.8,248.6 L-322.7,245.5 L-327.6,242.4 L-332.6,238.7 L-335.8,233.2 L-338.1,231.8 L-343.0,234.2 L-342.4,238.7 L-338.1,242.4 L-337.5,245.5 L-332.6,248.6 L-329.9,250.8 L-326.0,252.9 L-322.7,256.0 L-327.0,254.7 L-329.3,257.2 L-327.3,260.6 L-329.3,261.5 L-331.9,264.8 L-331.6,258.5 L-332.6,256.4 L-335.8,253.8 L-342.4,248.6 L-346.6,245.9 L-348.9,243.3 L-349.9,239.2 L-354.5,236.9 L-358.7,239.7 L-363.7,242.8 L-368.6,241.0 L-372.8,241.9 L-372.8,247.7 L-376.8,250.8 L-380.7,252.1 L-383.3,256.8 L-384.3,258.5 L-382.6,261.5 L-385.6,266.5 L-390.5,269.8 L-398.0,270.2 L-401.6,273.0 L-404.6,269.8 L-407.9,268.1 L-412.4,268.9 L-412.1,263.6Z M764.2,261.5 L766.2,247.7 L764.9,242.4 L769.1,240.1 L782.2,241.0 L790.4,241.5 L791.4,229.5 L787.2,223.3 L780.3,217.9 L785.5,215.9 L790.4,216.4 L791.4,211.4 L797.0,210.9 L800.2,209.4 L800.6,204.7 L806.8,203.2 L810.1,196.8 L811.7,192.5 L818.3,191.4 L823.2,190.8 L823.5,180.1 L822.2,172.5 L829.7,167.0 L830.7,175.4 L828.1,183.0 L833.0,187.5 L841.2,188.6 L847.7,186.9 L855.9,184.7 L860.8,185.8 L864.7,180.1 L864.1,171.3 L867.4,168.2 L873.9,169.4 L875.6,163.3 L872.3,157.0 L887.0,155.7 L893.6,152.4 L883.7,149.1 L869.0,150.5 L865.7,142.4 L865.7,131.8 L877.2,116.9 L877.2,111.4 L869.0,110.6 L865.7,120.7 L857.5,128.2 L852.0,136.8 L852.0,145.8 L855.9,152.4 L851.0,162.0 L849.4,175.4 L844.4,177.2 L837.9,180.7 L836.3,174.2 L834.0,165.2 L831.4,158.9 L829.7,155.7 L826.4,158.9 L818.3,165.2 L813.3,160.2 L811.7,149.1 L811.7,138.9 L821.5,128.2 L829.7,120.7 L836.3,109.0 L841.2,96.5 L846.1,87.8 L854.3,78.7 L864.1,73.9 L879.8,63.1 L888.6,64.1 L896.8,73.9 L903.4,80.5 L913.2,83.3 L929.6,96.5 L926.3,107.4 L919.8,109.0 L908.3,116.9 L916.5,124.5 L926.3,120.7 L939.4,107.4 L939.4,89.6 L945.9,92.2 L959.0,92.2 L970.5,89.6 L988.5,87.8 L995.1,78.7 L1011.4,78.7 L1018.0,88.7 L1014.7,69.1 L1021.2,42.9 L1031.1,45.1 L1034.3,59.0 L1032.7,104.9 L1037.6,96.5 L1039.3,47.3 L1044.2,53.8 L1057.3,50.6 L1058.9,36.1 L1076.9,31.4 L1080.2,19.1 L1116.2,-0.8 L1139.1,-23.1 L1165.3,37.2 L1166.9,48.4 L1181.7,42.9 L1201.3,37.2 L1209.5,39.5 L1221.0,64.1 L1234.1,59.0 L1253.7,48.4 L1273.3,50.6 L1286.4,59.0 L1293.0,66.1 L1319.2,73.9 L1335.5,78.7 L1351.9,75.8 L1371.6,78.7 L1384.7,85.1 L1384.7,115.3 L1378.1,120.7 L1374.8,135.4 L1365.0,140.3 L1351.9,152.4 L1338.8,152.4 L1330.6,153.1 L1325.7,165.2 L1329.0,177.2 L1324.1,185.8 L1314.3,199.5 L1307.7,203.7 L1305.4,183.0 L1307.7,166.4 L1312.6,165.2 L1319.2,145.8 L1309.4,142.4 L1299.5,155.7 L1286.4,155.7 L1276.6,157.0 L1263.5,157.0 L1255.3,168.2 L1243.9,188.6 L1255.3,193.0 L1258.0,199.5 L1255.3,209.9 L1254.7,218.4 L1247.2,229.5 L1237.3,241.0 L1230.8,244.2 L1225.9,244.2 L1221.0,246.4 L1219.3,254.2 L1216.0,263.6 L1219.0,273.0 L1217.7,276.6 L1209.5,279.4 L1208.8,268.9 L1204.9,265.6 L1203.0,257.2 L1194.8,260.6 L1193.1,252.9 L1188.2,256.4 L1181.7,259.8 L1180.7,263.6 L1184.9,268.1 L1189.9,265.6 L1196.4,267.7 L1188.2,275.8 L1190.8,286.9 L1194.4,292.7 L1194.8,297.2 L1189.9,305.8 L1187.6,311.3 L1183.3,316.7 L1178.4,320.3 L1171.8,323.2 L1166.9,324.9 L1160.4,327.4 L1157.1,328.4 L1154.8,327.4 L1148.9,327.4 L1144.0,331.9 L1141.7,336.8 L1144.0,342.0 L1148.9,346.4 L1151.6,348.5 L1153.2,356.6 L1152.2,361.6 L1147.3,364.9 L1144.0,368.3 L1139.1,370.9 L1139.1,366.6 L1134.2,364.9 L1130.9,359.9 L1125.7,357.6 L1122.7,354.9 L1120.1,365.9 L1122.1,369.9 L1124.0,375.5 L1127.0,377.2 L1130.9,379.8 L1133.9,384.8 L1134.2,391.3 L1136.5,394.9 L1134.2,395.2 L1127.0,390.3 L1123.7,381.5 L1123.4,378.2 L1117.2,373.2 L1118.2,366.6 L1117.8,359.9 L1116.2,356.6 L1114.9,344.7 L1109.6,343.0 L1107.4,347.1 L1104.1,345.7 L1104.7,337.8 L1101.5,332.6 L1097.5,327.4 L1095.9,323.9 L1091.6,325.6 L1086.7,326.7 L1085.1,326.3 L1079.5,330.5 L1073.6,334.4 L1068.7,339.6 L1064.8,344.4 L1060.5,347.1 L1058.2,348.1 L1057.9,356.6 L1056.6,363.3 L1056.6,365.6 L1052.3,369.9 L1049.1,372.9 L1045.1,367.3 L1042.5,361.6 L1040.9,357.2 L1038.3,349.8 L1036.0,346.4 L1033.7,336.1 L1033.0,328.1 L1032.7,325.6 L1025.5,329.8 L1021.2,324.2 L1024.5,322.8 L1019.6,320.3 L1015.7,316.7 L1013.1,313.5 L1004.9,313.8 L997.0,314.2 L988.5,313.1 L982.9,312.0 L979.7,306.9 L973.8,308.7 L967.6,305.8 L962.3,302.1 L960.0,296.5 L954.1,295.3 L952.5,296.5 L954.1,303.9 L959.0,309.5 L960.7,313.1 L964.3,314.9 L964.0,310.6 L965.6,318.5 L972.1,317.8 L979.7,309.8 L980.3,316.7 L985.2,319.6 L991.1,323.9 L986.9,330.9 L984.6,336.1 L980.3,339.6 L975.4,342.3 L966.2,347.4 L954.1,353.2 L942.7,357.2 L937.8,357.6 L935.1,348.1 L934.5,343.0 L929.6,336.1 L923.7,327.4 L921.4,320.3 L916.5,314.9 L911.6,305.8 L909.9,303.9 L908.3,298.3 L906.7,303.9 L903.4,300.2 L902.1,296.8 L901.1,291.9 L908.3,290.7 L909.9,284.9 L912.5,273.8 L913.9,269.8 L906.7,271.8 L900.1,272.2 L895.2,271.0 L888.6,270.2 L884.7,266.9 L883.7,262.7 L882.1,258.5 L881.1,256.4 L883.7,254.2 L890.3,251.2 L885.4,254.2 L882.1,253.8 L880.5,252.9 L873.9,252.9 L870.6,254.2 L873.9,258.5 L870.0,260.6 L873.9,264.0 L870.0,266.9 L871.3,271.0 L869.0,271.0 L866.4,269.8 L864.7,265.6 L865.1,263.1 L861.5,258.5 L859.2,256.4 L858.9,248.6 L855.9,245.5 L851.0,242.4 L846.1,238.7 L842.8,233.2 L840.5,231.8 L835.6,234.2 L836.3,238.7 L840.5,242.4 L841.2,245.5 L846.1,248.6 L848.7,250.8 L852.6,252.9 L855.9,256.0 L851.7,254.7 L849.4,257.2 L851.3,260.6 L849.4,261.5 L846.7,264.8 L847.1,258.5 L846.1,256.4 L842.8,253.8 L836.3,248.6 L832.0,245.9 L829.7,243.3 L828.7,239.2 L824.2,236.9 L819.9,239.7 L815.0,242.8 L810.1,241.0 L805.8,241.9 L805.8,247.7 L801.9,250.8 L798.0,252.1 L795.3,256.8 L794.4,258.5 L796.0,261.5 L793.0,266.5 L788.1,269.8 L780.6,270.2 L777.0,273.0 L774.1,269.8 L770.8,268.1 L766.2,268.9 L766.5,263.6Z M1942.9,261.5 L1944.8,247.7 L1943.5,242.4 L1947.8,240.1 L1960.9,241.0 L1969.1,241.5 L1970.1,229.5 L1965.8,223.3 L1958.9,217.9 L1964.2,215.9 L1969.1,216.4 L1970.1,211.4 L1975.6,210.9 L1978.9,209.4 L1979.2,204.7 L1985.4,203.2 L1988.7,196.8 L1990.3,192.5 L1996.9,191.4 L2001.8,190.8 L2002.1,180.1 L2000.8,172.5 L2008.4,167.0 L2009.3,175.4 L2006.7,183.0 L2011.6,187.5 L2019.8,188.6 L2026.4,186.9 L2034.5,184.7 L2039.5,185.8 L2043.4,180.1 L2042.7,171.3 L2046.0,168.2 L2052.6,169.4 L2054.2,163.3 L2050.9,157.0 L2065.7,155.7 L2072.2,152.4 L2062.4,149.1 L2047.6,150.5 L2044.4,142.4 L2044.4,131.8 L2055.8,116.9 L2055.8,111.4 L2047.6,110.6 L2044.4,120.7 L2036.2,128.2 L2030.6,136.8 L2030.6,145.8 L2034.5,152.4 L2029.6,162.0 L2028.0,175.4 L2023.1,177.2 L2016.5,180.7 L2014.9,174.2 L2012.6,165.2 L2010.0,158.9 L2008.4,155.7 L2005.1,158.9 L1996.9,165.2 L1992.0,160.2 L1990.3,149.1 L1990.3,138.9 L2000.2,128.2 L2008.4,120.7 L2014.9,109.0 L2019.8,96.5 L2024.7,87.8 L2032.9,78.7 L2042.7,73.9 L2058.4,63.1 L2067.3,64.1 L2075.5,73.9 L2082.0,80.5 L2091.8,83.3 L2108.2,96.5 L2104.9,107.4 L2098.4,109.0 L2086.9,116.9 L2095.1,124.5 L2104.9,120.7 L2118.0,107.4 L2118.0,89.6 L2124.6,92.2 L2137.7,92.2 L2149.1,89.6 L2167.1,87.8 L2173.7,78.7 L2190.1,78.7 L2196.6,88.7 L2193.3,69.1 L2199.9,42.9 L2209.7,45.1 L2213.0,59.0 L2211.3,104.9 L2216.3,96.5 L2217.9,47.3 L2222.8,53.8 L2235.9,50.6 L2237.5,36.1 L2255.5,31.4 L2258.8,19.1 L2294.8,-0.8 L2317.7,-23.1 L2343.9,37.2 L2345.6,48.4 L2360.3,42.9 L2380.0,37.2 L2388.1,39.5 L2399.6,64.1 L2412.7,59.0 L2432.3,48.4 L2452.0,50.6 L2465.1,59.0 L2471.6,66.1 L2497.8,73.9 L2514.2,78.7 L2530.6,75.8 L2550.2,78.7 L2563.3,85.1 L2563.3,115.3 L2556.8,120.7 L2553.5,135.4 L2543.7,140.3 L2530.6,152.4 L2517.5,152.4 L2509.3,153.1 L2504.4,165.2 L2507.6,177.2 L2502.7,185.8 L2492.9,199.5 L2486.4,203.7 L2484.1,183.0 L2486.4,166.4 L2491.3,165.2 L2497.8,145.8 L2488.0,142.4 L2478.2,155.7 L2465.1,155.7 L2455.3,157.0 L2442.2,157.0 L2434.0,168.2 L2422.5,188.6 L2434.0,193.0 L2436.6,199.5 L2434.0,209.9 L2433.3,218.4 L2425.8,229.5 L2416.0,241.0 L2409.4,244.2 L2404.5,244.2 L2399.6,246.4 L2398.0,254.2 L2394.7,263.6 L2397.6,273.0 L2396.3,276.6 L2388.1,279.4 L2387.5,268.9 L2383.6,265.6 L2381.6,257.2 L2373.4,260.6 L2371.8,252.9 L2366.9,256.4 L2360.3,259.8 L2359.3,263.6 L2363.6,268.1 L2368.5,265.6 L2375.0,267.7 L2366.9,275.8 L2369.5,286.9 L2373.1,292.7 L2373.4,297.2 L2368.5,305.8 L2366.2,311.3 L2361.9,316.7 L2357.0,320.3 L2350.5,323.2 L2345.6,324.9 L2339.0,327.4 L2335.8,328.4 L2333.5,327.4 L2327.6,327.4 L2322.7,331.9 L2320.4,336.8 L2322.7,342.0 L2327.6,346.4 L2330.2,348.5 L2331.8,356.6 L2330.8,361.6 L2325.9,364.9 L2322.7,368.3 L2317.7,370.9 L2317.7,366.6 L2312.8,364.9 L2309.6,359.9 L2304.3,357.6 L2301.4,354.9 L2298.8,365.9 L2300.7,369.9 L2302.7,375.5 L2305.6,377.2 L2309.6,379.8 L2312.5,384.8 L2312.8,391.3 L2315.1,394.9 L2312.8,395.2 L2305.6,390.3 L2302.4,381.5 L2302.0,378.2 L2295.8,373.2 L2296.8,366.6 L2296.5,359.9 L2294.8,356.6 L2293.5,344.7 L2288.3,343.0 L2286.0,347.1 L2282.7,345.7 L2283.4,337.8 L2280.1,332.6 L2276.2,327.4 L2274.5,323.9 L2270.3,325.6 L2265.4,326.7 L2263.7,326.3 L2258.2,330.5 L2252.3,334.4 L2247.4,339.6 L2243.4,344.4 L2239.2,347.1 L2236.9,348.1 L2236.6,356.6 L2235.2,363.3 L2235.2,365.6 L2231.0,369.9 L2227.7,372.9 L2223.8,367.3 L2221.2,361.6 L2219.5,357.2 L2216.9,349.8 L2214.6,346.4 L2212.3,336.1 L2211.7,328.1 L2211.3,325.6 L2204.1,329.8 L2199.9,324.2 L2203.2,322.8 L2198.2,320.3 L2194.3,316.7 L2191.7,313.5 L2183.5,313.8 L2175.7,314.2 L2167.1,313.1 L2161.6,312.0 L2158.3,306.9 L2152.4,308.7 L2146.2,305.8 L2141.0,302.1 L2138.7,296.5 L2132.8,295.3 L2131.1,296.5 L2132.8,303.9 L2137.7,309.5 L2139.3,313.1 L2142.9,314.9 L2142.6,310.6 L2144.2,318.5 L2150.8,317.8 L2158.3,309.8 L2159.0,316.7 L2163.9,319.6 L2169.8,323.9 L2165.5,330.9 L2163.2,336.1 L2159.0,339.6 L2154.0,342.3 L2144.9,347.4 L2132.8,353.2 L2121.3,357.2 L2116.4,357.6 L2113.8,348.1 L2113.1,343.0 L2108.2,336.1 L2102.3,327.4 L2100.0,320.3 L2095.1,314.9 L2090.2,305.8 L2088.6,303.9 L2086.9,298.3 L2085.3,303.9 L2082.0,300.2 L2080.7,296.8 L2079.7,291.9 L2086.9,290.7 L2088.6,284.9 L2091.2,273.8 L2092.5,269.8 L2085.3,271.8 L2078.7,272.2 L2073.8,271.0 L2067.3,270.2 L2063.4,266.9 L2062.4,262.7 L2060.7,258.5 L2059.8,256.4 L2062.4,254.2 L2068.9,251.2 L2064.0,254.2 L2060.7,253.8 L2059.1,252.9 L2052.6,252.9 L2049.3,254.2 L2052.6,258.5 L2048.6,260.6 L2052.6,264.0 L2048.6,266.9 L2049.9,271.0 L2047.6,271.0 L2045.0,269.8 L2043.4,265.6 L2043.7,263.1 L2040.1,258.5 L2037.8,256.4 L2037.5,248.6 L2034.5,245.5 L2029.6,242.4 L2024.7,238.7 L2021.5,233.2 L2019.2,231.8 L2014.2,234.2 L2014.9,238.7 L2019.2,242.4 L2019.8,245.5 L2024.7,248.6 L2027.3,250.8 L2031.3,252.9 L2034.5,256.0 L2030.3,254.7 L2028.0,257.2 L2030.0,260.6 L2028.0,261.5 L2025.4,264.8 L2025.7,258.5 L2024.7,256.4 L2021.5,253.8 L2014.9,248.6 L2010.6,245.9 L2008.4,243.3 L2007.4,239.2 L2002.8,236.9 L1998.5,239.7 L1993.6,242.8 L1988.7,241.0 L1984.5,241.9 L1984.5,247.7 L1980.5,250.8 L1976.6,252.1 L1974.0,256.8 L1973.0,258.5 L1974.6,261.5 L1971.7,266.5 L1966.8,269.8 L1959.2,270.2 L1955.6,273.0 L1952.7,269.8 L1949.4,268.1 L1944.8,268.9 L1945.2,263.6Z M-275.3,296.5 L-277.6,291.9 L-285.1,291.5 L-291.6,292.7 L-301.5,290.0 L-308.0,286.5 L-317.8,288.0 L-321.1,295.3 L-327.6,292.7 L-332.6,288.8 L-334.2,287.6 L-340.7,285.3 L-347.3,283.8 L-349.9,279.0 L-347.3,276.2 L-349.9,268.9 L-353.8,268.1 L-360.4,268.9 L-366.9,269.8 L-373.5,269.8 L-380.0,271.0 L-386.6,274.2 L-391.5,276.2 L-399.7,273.4 L-401.3,273.4 L-403.9,277.0 L-405.6,281.0 L-411.1,283.8 L-415.1,294.6 L-416.0,298.3 L-421.0,302.8 L-426.2,305.8 L-430.8,311.3 L-432.4,316.7 L-435.7,320.3 L-439.0,329.1 L-436.3,332.6 L-437.3,334.4 L-436.3,343.0 L-437.6,346.4 L-440.6,350.8 L-438.3,354.9 L-438.3,358.6 L-434.0,361.6 L-432.4,363.3 L-427.5,367.3 L-426.8,369.9 L-424.2,373.9 L-421.0,376.5 L-416.0,379.8 L-412.8,383.1 L-407.9,385.1 L-402.9,384.8 L-396.4,382.5 L-389.8,383.8 L-380.0,380.1 L-373.5,378.8 L-368.6,379.2 L-365.3,383.1 L-363.7,385.4 L-360.4,385.1 L-355.5,384.4 L-352.9,387.0 L-351.2,391.3 L-352.2,396.2 L-353.8,402.8 L-348.9,407.7 L-344.0,415.9 L-342.4,420.8 L-340.7,429.1 L-339.1,435.7 L-338.1,439.1 L-342.4,447.5 L-344.7,456.0 L-342.4,462.9 L-339.1,469.9 L-335.8,476.6 L-334.2,487.7 L-333.2,491.4 L-329.3,497.7 L-327.6,500.7 L-324.4,510.2 L-322.7,518.8 L-317.8,521.2 L-309.6,518.0 L-299.8,518.0 L-294.9,516.0 L-290.0,512.1 L-283.4,504.4 L-280.2,498.8 L-276.9,496.9 L-275.6,487.7 L-275.3,485.2 L-267.1,480.5 L-267.7,473.4 L-268.7,466.4 L-263.8,461.8 L-257.3,457.7 L-252.3,452.6 L-250.7,445.8 L-250.4,435.7 L-253.3,429.1 L-254.6,422.5 L-256.3,419.2 L-255.0,414.2 L-251.7,409.3 L-247.4,405.4 L-244.2,401.1 L-240.9,396.2 L-234.3,392.3 L-229.4,388.0 L-226.1,383.1 L-222.9,378.2 L-218.0,369.9 L-215.3,364.9 L-215.3,360.6 L-222.9,362.3 L-229.4,363.3 L-236.0,364.9 L-239.2,364.9 L-241.5,361.6 L-243.5,358.2 L-244.2,356.6 L-249.1,352.2 L-252.3,348.1 L-254.6,346.4 L-257.3,339.6 L-261.2,329.1 L-262.8,325.6 L-266.7,318.9 L-268.7,313.1 L-272.0,309.1 L-275.3,303.2 L-276.9,297.2Z M903.4,296.5 L901.1,291.9 L893.6,291.5 L887.0,292.7 L877.2,290.0 L870.6,286.5 L860.8,288.0 L857.5,295.3 L851.0,292.7 L846.1,288.8 L844.4,287.6 L837.9,285.3 L831.4,283.8 L828.7,279.0 L831.4,276.2 L828.7,268.9 L824.8,268.1 L818.3,268.9 L811.7,269.8 L805.2,269.8 L798.6,271.0 L792.1,274.2 L787.2,276.2 L779.0,273.4 L777.3,273.4 L774.7,277.0 L773.1,281.0 L767.5,283.8 L763.6,294.6 L762.6,298.3 L757.7,302.8 L752.4,305.8 L747.9,311.3 L746.2,316.7 L743.0,320.3 L739.7,329.1 L742.3,332.6 L741.3,334.4 L742.3,343.0 L741.0,346.4 L738.0,350.8 L740.3,354.9 L740.3,358.6 L744.6,361.6 L746.2,363.3 L751.1,367.3 L751.8,369.9 L754.4,373.9 L757.7,376.5 L762.6,379.8 L765.9,383.1 L770.8,385.1 L775.7,384.8 L782.2,382.5 L788.8,383.8 L798.6,380.1 L805.2,378.8 L810.1,379.2 L813.3,383.1 L815.0,385.4 L818.3,385.1 L823.2,384.4 L825.8,387.0 L827.4,391.3 L826.4,396.2 L824.8,402.8 L829.7,407.7 L834.6,415.9 L836.3,420.8 L837.9,429.1 L839.5,435.7 L840.5,439.1 L836.3,447.5 L834.0,456.0 L836.3,462.9 L839.5,469.9 L842.8,476.6 L844.4,487.7 L845.4,491.4 L849.4,497.7 L851.0,500.7 L854.3,510.2 L855.9,518.8 L860.8,521.2 L869.0,518.0 L878.8,518.0 L883.7,516.0 L888.6,512.1 L895.2,504.4 L898.5,498.8 L901.7,496.9 L903.1,487.7 L903.4,485.2 L911.6,480.5 L910.9,473.4 L909.9,466.4 L914.8,461.8 L921.4,457.7 L926.3,452.6 L927.9,445.8 L928.3,435.7 L925.3,429.1 L924.0,422.5 L922.4,419.2 L923.7,414.2 L927.0,409.3 L931.2,405.4 L934.5,401.1 L937.8,396.2 L944.3,392.3 L949.2,388.0 L952.5,383.1 L955.8,378.2 L960.7,369.9 L963.3,364.9 L963.3,360.6 L955.8,362.3 L949.2,363.3 L942.7,364.9 L939.4,364.9 L937.1,361.6 L935.1,358.2 L934.5,356.6 L929.6,352.2 L926.3,348.1 L924.0,346.4 L921.4,339.6 L917.5,329.1 L915.8,325.6 L911.9,318.9 L909.9,313.1 L906.7,309.1 L903.4,303.2 L901.7,297.2Z M2082.0,296.5 L2079.7,291.9 L2072.2,291.5 L2065.7,292.7 L2055.8,290.0 L2049.3,286.5 L2039.5,288.0 L2036.2,295.3 L2029.6,292.7 L2024.7,288.8 L2023.1,287.6 L2016.5,285.3 L2010.0,283.8 L2007.4,279.0 L2010.0,276.2 L2007.4,268.9 L2003.4,268.1 L1996.9,268.9 L1990.3,269.8 L1983.8,269.8 L1977.3,271.0 L1970.7,274.2 L1965.8,276.2 L1957.6,273.4 L1956.0,273.4 L1953.4,277.0 L1951.7,281.0 L1946.2,283.8 L1942.2,294.6 L1941.2,298.3 L1936.3,302.8 L1931.1,305.8 L1926.5,311.3 L1924.9,316.7 L1921.6,320.3 L1918.3,329.1 L1920.9,332.6 L1920.0,334.4 L1920.9,343.0 L1919.6,346.4 L1916.7,350.8 L1919.0,354.9 L1919.0,358.6 L1923.2,361.6 L1924.9,363.3 L1929.8,367.3 L1930.4,369.9 L1933.1,373.9 L1936.3,376.5 L1941.2,379.8 L1944.5,383.1 L1949.4,385.1 L1954.3,384.8 L1960.9,382.5 L1967.4,383.8 L1977.3,380.1 L1983.8,378.8 L1988.7,379.2 L1992.0,383.1 L1993.6,385.4 L1996.9,385.1 L2001.8,384.4 L2004.4,387.0 L2006.1,391.3 L2005.1,396.2 L2003.4,402.8 L2008.4,407.7 L2013.3,415.9 L2014.9,420.8 L2016.5,429.1 L2018.2,435.7 L2019.2,439.1 L2014.9,447.5 L2012.6,456.0 L2014.9,462.9 L2018.2,469.9 L2021.5,476.6 L2023.1,487.7 L2024.1,491.4 L2028.0,497.7 L2029.6,500.7 L2032.9,510.2 L2034.5,518.8 L2039.5,521.2 L2047.6,518.0 L2057.5,518.0 L2062.4,516.0 L2067.3,512.1 L2073.8,504.4 L2077.1,498.8 L2080.4,496.9 L2081.7,487.7 L2082.0,485.2 L2090.2,480.5 L2089.6,473.4 L2088.6,466.4 L2093.5,461.8 L2100.0,457.7 L2104.9,452.6 L2106.6,445.8 L2106.9,435.7 L2104.0,429.1 L2102.6,422.5 L2101.0,419.2 L2102.3,414.2 L2105.6,409.3 L2109.9,405.4 L2113.1,401.1 L2116.4,396.2 L2122.9,392.3 L2127.9,388.0 L2131.1,383.1 L2134.4,378.2 L2139.3,369.9 L2141.9,364.9 L2141.9,360.6 L2134.4,362.3 L2127.9,363.3 L2121.3,364.9 L2118.0,364.9 L2115.7,361.6 L2113.8,358.2 L2113.1,356.6 L2108.2,352.2 L2104.9,348.1 L2102.6,346.4 L2100.0,339.6 L2096.1,329.1 L2094.5,325.6 L2090.5,318.9 L2088.6,313.1 L2085.3,309.1 L2082.0,303.2 L2080.4,297.2Z M-402.0,209.4 L-394.8,208.4 L-386.6,206.3 L-378.7,203.7 L-377.7,195.7 L-382.3,191.4 L-384.9,185.8 L-388.2,183.0 L-389.8,177.2 L-394.1,175.4 L-389.2,167.6 L-393.1,161.4 L-399.7,161.4 L-403.6,172.5 L-401.3,180.1 L-399.0,184.1 L-393.1,188.6 L-393.1,192.5 L-398.7,195.2 L-400.3,200.5 L-393.8,202.7 L-398.0,203.7Z M776.7,209.4 L783.9,208.4 L792.1,206.3 L799.9,203.7 L800.9,195.7 L796.3,191.4 L793.7,185.8 L790.4,183.0 L788.8,177.2 L784.5,175.4 L789.4,167.6 L785.5,161.4 L779.0,161.4 L775.0,172.5 L777.3,180.1 L779.6,184.1 L785.5,188.6 L785.5,192.5 L780.0,195.2 L778.3,200.5 L784.9,202.7 L780.6,203.7Z M1955.3,209.4 L1962.5,208.4 L1970.7,206.3 L1978.6,203.7 L1979.5,195.7 L1975.0,191.4 L1972.3,185.8 L1969.1,183.0 L1967.4,177.2 L1963.2,175.4 L1968.1,167.6 L1964.2,161.4 L1957.6,161.4 L1953.7,172.5 L1956.0,180.1 L1958.3,184.1 L1964.2,188.6 L1964.2,192.5 L1958.6,195.2 L1957.0,200.5 L1963.5,202.7 L1959.2,203.7Z M-402.9,198.4 L-402.9,189.7 L-401.6,184.7 L-407.9,181.2 L-411.5,186.9 L-416.0,191.4 L-417.0,200.5 L-411.1,201.6Z M775.7,198.4 L775.7,189.7 L777.0,184.7 L770.8,181.2 L767.2,186.9 L762.6,191.4 L761.6,200.5 L767.5,201.6Z M1954.3,198.4 L1954.3,189.7 L1955.6,184.7 L1949.4,181.2 L1945.8,186.9 L1941.2,191.4 L1940.3,200.5 L1946.2,201.6Z M-10.1,473.4 L-1.9,468.8 L6.3,466.4 L12.9,464.6 L16.8,457.7 L21.4,454.3 L27.6,447.5 L34.1,445.8 L37.4,449.2 L40.7,449.2 L43.0,442.4 L50.8,437.4 L58.7,439.8 L64.6,439.8 L62.0,444.1 L60.3,449.2 L65.2,452.6 L72.8,457.4 L77.7,457.7 L80.0,449.2 L80.3,442.4 L83.2,434.7 L84.9,438.4 L86.5,445.8 L89.8,446.8 L92.4,448.8 L93.1,454.3 L95.7,462.9 L101.3,466.4 L104.5,469.9 L110.4,475.1 L114.3,482.3 L117.9,485.9 L118.3,491.4 L119.6,497.7 L117.6,506.3 L116.0,510.2 L111.7,518.0 L108.5,526.0 L107.8,532.1 L101.3,533.4 L99.6,534.2 L95.7,538.8 L91.4,535.0 L88.2,535.4 L81.6,535.9 L76.7,534.2 L74.1,530.9 L73.4,526.0 L68.5,524.8 L70.1,520.0 L68.5,518.0 L66.9,522.8 L67.9,514.1 L63.6,518.0 L62.0,522.0 L60.7,521.6 L58.7,516.0 L56.1,513.3 L48.9,510.2 L46.2,508.3 L35.8,509.4 L29.2,511.4 L22.7,514.1 L21.0,517.6 L9.6,518.0 L2.4,522.4 L-3.5,521.2 L-6.8,519.2 L-4.5,510.2 L-6.8,500.7 L-8.4,495.1 L-11.7,489.5 L-11.7,482.3 L-10.7,476.9Z M1168.6,473.4 L1176.8,468.8 L1184.9,466.4 L1191.5,464.6 L1195.4,457.7 L1200.0,454.3 L1206.2,447.5 L1212.8,445.8 L1216.0,449.2 L1219.3,449.2 L1221.6,442.4 L1229.5,437.4 L1237.3,439.8 L1243.2,439.8 L1240.6,444.1 L1239.0,449.2 L1243.9,452.6 L1251.4,457.4 L1256.3,457.7 L1258.6,449.2 L1258.9,442.4 L1261.9,434.7 L1263.5,438.4 L1265.2,445.8 L1268.4,446.8 L1271.1,448.8 L1271.7,454.3 L1274.3,462.9 L1279.9,466.4 L1283.2,469.9 L1289.1,475.1 L1293.0,482.3 L1296.6,485.9 L1296.9,491.4 L1298.2,497.7 L1296.3,506.3 L1294.6,510.2 L1290.4,518.0 L1287.1,526.0 L1286.4,532.1 L1279.9,533.4 L1278.3,534.2 L1274.3,538.8 L1270.1,535.0 L1266.8,535.4 L1260.2,535.9 L1255.3,534.2 L1252.7,530.9 L1252.1,526.0 L1247.2,524.8 L1248.8,520.0 L1247.2,518.0 L1245.5,522.8 L1246.5,514.1 L1242.2,518.0 L1240.6,522.0 L1239.3,521.6 L1237.3,516.0 L1234.7,513.3 L1227.5,510.2 L1224.9,508.3 L1214.4,509.4 L1207.9,511.4 L1201.3,514.1 L1199.7,517.6 L1188.2,518.0 L1181.0,522.4 L1175.1,521.2 L1171.8,519.2 L1174.1,510.2 L1171.8,500.7 L1170.2,495.1 L1166.9,489.5 L1166.9,482.3 L1167.9,476.9Z M2347.2,473.4 L2355.4,468.8 L2363.6,466.4 L2370.1,464.6 L2374.1,457.7 L2378.6,454.3 L2384.9,447.5 L2391.4,445.8 L2394.7,449.2 L2398.0,449.2 L2400.3,442.4 L2408.1,437.4 L2416.0,439.8 L2421.9,439.8 L2419.2,444.1 L2417.6,449.2 L2422.5,452.6 L2430.0,457.4 L2435.0,457.7 L2437.2,449.2 L2437.6,442.4 L2440.5,434.7 L2442.2,438.4 L2443.8,445.8 L2447.1,446.8 L2449.7,448.8 L2450.3,454.3 L2453.0,462.9 L2458.5,466.4 L2461.8,469.9 L2467.7,475.1 L2471.6,482.3 L2475.2,485.9 L2475.6,491.4 L2476.9,497.7 L2474.9,506.3 L2473.3,510.2 L2469.0,518.0 L2465.7,526.0 L2465.1,532.1 L2458.5,533.4 L2456.9,534.2 L2453.0,538.8 L2448.7,535.0 L2445.4,535.4 L2438.9,535.9 L2434.0,534.2 L2431.4,530.9 L2430.7,526.0 L2425.8,524.8 L2427.4,520.0 L2425.8,518.0 L2424.2,522.8 L2425.1,514.1 L2420.9,518.0 L2419.2,522.0 L2417.9,521.6 L2416.0,516.0 L2413.3,513.3 L2406.1,510.2 L2403.5,508.3 L2393.1,509.4 L2386.5,511.4 L2380.0,514.1 L2378.3,517.6 L2366.9,518.0 L2359.7,522.4 L2353.8,521.2 L2350.5,519.2 L2352.8,510.2 L2350.5,500.7 L2348.9,495.1 L2345.6,489.5 L2345.6,482.3 L2346.6,476.9Z M-213.1,59.0 L-200.0,42.9 L-196.7,12.7 L-177.0,-0.8 L-160.7,-8.0 L-180.3,19.1 L-196.7,64.1 L-206.5,66.1Z M965.6,59.0 L978.7,42.9 L982.0,12.7 L1001.6,-0.8 L1018.0,-8.0 L998.3,19.1 L982.0,64.1 L972.1,66.1Z M2144.2,59.0 L2157.3,42.9 L2160.6,12.7 L2180.2,-0.8 L2196.6,-8.0 L2177.0,19.1 L2160.6,64.1 L2150.8,66.1Z M-72.3,-39.6 L-55.9,-8.0 L-39.5,-39.6Z M1106.4,-39.6 L1122.7,-8.0 L1139.1,-39.6Z M2285.0,-39.6 L2301.4,-8.0 L2317.7,-39.6Z M65.2,6.0 L81.6,12.7 L91.4,19.1 L107.8,6.0 L75.1,-8.0Z M1243.9,6.0 L1260.2,12.7 L1270.1,19.1 L1286.4,6.0 L1253.7,-8.0Z M2422.5,6.0 L2438.9,12.7 L2448.7,19.1 L2465.1,6.0 L2432.3,-8.0Z M-972.6,59.0 L-962.8,61.1 L-966.1,65.1Z M206.0,59.0 L215.8,61.1 L212.6,65.1Z M1384.7,59.0 L1394.5,61.1 L1391.2,65.1Z M-347.3,-31.2 L-324.4,-0.8 L-301.5,-8.0 L-291.6,-57.5 L-344.0,-57.5Z M831.4,-31.2 L854.3,-0.8 L877.2,-8.0 L887.0,-57.5 L834.6,-57.5Z M2010.0,-31.2 L2032.9,-0.8 L2055.8,-8.0 L2065.7,-57.5 L2013.3,-57.5Z" fill="#f2f1ec" stroke="#f2f1ec" stroke-width="1.6" stroke-linejoin="round"/>
<path d="M-748.4,161.4 L-730.3,157.0 L-731.3,159.5 L-746.7,163.3Z M430.3,161.4 L448.3,157.0 L447.3,159.5 L431.9,163.3Z M1608.9,161.4 L1626.9,157.0 L1626.0,159.5 L1610.6,163.3Z M-719.9,174.8 L-716.6,165.2 L-718.6,164.5 L-721.2,173.6Z M458.8,174.8 L462.0,165.2 L460.1,164.5 L457.5,173.6Z M1637.4,174.8 L1640.7,165.2 L1638.7,164.5 L1636.1,173.6Z M-718.2,134.0 L-712.7,128.9 L-714.6,136.1Z M460.4,134.0 L466.0,128.9 L464.0,136.1Z M1639.0,134.0 L1644.6,128.9 L1642.7,136.1Z M-699.2,124.5 L-691.1,121.5 L-696.0,125.2Z M479.4,124.5 L487.6,121.5 L482.7,125.2Z M1658.0,124.5 L1666.2,121.5 L1661.3,125.2Z M-711.7,156.3 L-707.4,147.1 L-709.4,155.0Z M467.0,156.3 L471.2,147.1 L469.2,155.0Z M1645.6,156.3 L1649.9,147.1 L1647.9,155.0Z M-620.7,107.4 L-612.5,102.4 L-615.8,106.6Z M558.0,107.4 L566.2,102.4 L562.9,106.6Z M1736.6,107.4 L1744.8,102.4 L1741.5,106.6Z M-708.4,208.4 L-705.1,201.1 L-706.4,208.9Z M470.2,208.4 L473.5,201.1 L472.2,208.9Z M1648.9,208.4 L1652.1,201.1 L1650.8,208.9Z M-625.6,205.8 L-622.3,201.6 L-623.6,206.3Z M553.1,205.8 L556.3,201.6 L555.0,206.3Z M1731.7,205.8 L1735.0,201.6 L1733.7,206.3Z M-597.7,190.3 L-591.2,185.8 L-592.8,191.4Z M580.9,190.3 L587.4,185.8 L585.8,191.4Z M1759.5,190.3 L1766.1,185.8 L1764.4,191.4Z M-619.0,118.4 L-614.1,115.3 L-617.4,120.0Z M559.6,118.4 L564.5,115.3 L561.2,120.0Z M1738.3,118.4 L1743.2,115.3 L1739.9,120.0Z M-230.4,236.0 L-227.8,231.8 L-221.2,227.1 L-214.7,224.2 L-208.8,227.1 L-209.8,233.2 L-215.3,236.5 L-216.3,243.3 L-210.4,247.7 L-206.8,256.4 L-206.8,264.8 L-213.1,268.9 L-218.6,267.7 L-222.9,263.1 L-221.2,255.5 L-224.5,249.9 L-227.8,246.8 L-227.8,241.0Z M948.2,236.0 L950.9,231.8 L957.4,227.1 L964.0,224.2 L969.8,227.1 L968.9,233.2 L963.3,236.5 L962.3,243.3 L968.2,247.7 L971.8,256.4 L971.8,264.8 L965.6,268.9 L960.0,267.7 L955.8,263.1 L957.4,255.5 L954.1,249.9 L950.9,246.8 L950.9,241.0Z M2126.9,236.0 L2129.5,231.8 L2136.0,227.1 L2142.6,224.2 L2148.5,227.1 L2147.5,233.2 L2141.9,236.5 L2141.0,243.3 L2146.8,247.7 L2150.4,256.4 L2150.4,264.8 L2144.2,268.9 L2138.7,267.7 L2134.4,263.1 L2136.0,255.5 L2132.8,249.9 L2129.5,246.8 L2129.5,241.0Z M-291.6,249.5 L-290.0,241.0 L-286.7,234.2 L-284.1,231.8 L-280.2,226.6 L-273.6,229.5 L-276.9,232.3 L-273.6,236.9 L-268.7,235.1 L-263.8,233.2 L-268.7,231.8 L-268.7,228.1 L-258.9,224.7 L-254.0,223.8 L-257.9,229.5 L-260.5,236.5 L-257.3,237.4 L-250.7,243.3 L-247.1,249.9 L-252.3,252.1 L-258.9,252.1 L-265.4,249.9 L-268.7,247.7 L-273.6,247.7 L-281.8,251.2 L-288.0,251.6Z M887.0,249.5 L888.6,241.0 L891.9,234.2 L894.5,231.8 L898.5,226.6 L905.0,229.5 L901.7,232.3 L905.0,236.9 L909.9,235.1 L914.8,233.2 L909.9,231.8 L909.9,228.1 L919.8,224.7 L924.7,223.8 L920.7,229.5 L918.1,236.5 L921.4,237.4 L927.9,243.3 L931.5,249.9 L926.3,252.1 L919.8,252.1 L913.2,249.9 L909.9,247.7 L905.0,247.7 L896.8,251.2 L890.6,251.6Z M2065.7,249.5 L2067.3,241.0 L2070.6,234.2 L2073.2,231.8 L2077.1,226.6 L2083.7,229.5 L2080.4,232.3 L2083.7,236.9 L2088.6,235.1 L2093.5,233.2 L2088.6,231.8 L2088.6,228.1 L2098.4,224.7 L2103.3,223.8 L2099.4,229.5 L2096.8,236.5 L2100.0,237.4 L2106.6,243.3 L2110.2,249.9 L2104.9,252.1 L2098.4,252.1 L2091.8,249.9 L2088.6,247.7 L2083.7,247.7 L2075.5,251.2 L2069.3,251.6Z M-141.0,227.1 L-124.7,225.7 L-124.7,230.4 L-134.5,229.5Z M1037.6,227.1 L1054.0,225.7 L1054.0,230.4 L1044.2,229.5Z M2216.3,227.1 L2232.6,225.7 L2232.6,230.4 L2222.8,229.5Z M-792.6,114.6 L-782.7,102.4 L-772.9,104.9 L-769.6,113.0 L-779.5,116.9Z M386.1,114.6 L395.9,102.4 L405.7,104.9 L409.0,113.0 L399.2,116.9Z M1564.7,114.6 L1574.6,102.4 L1584.4,104.9 L1587.6,113.0 L1577.8,116.9Z M-766.4,144.4 L-753.3,133.3 L-740.2,135.4 L-750.0,141.7 L-763.1,146.5Z M412.3,144.4 L425.4,133.3 L438.5,135.4 L428.7,141.7 L415.6,146.5Z M1590.9,144.4 L1604.0,133.3 L1617.1,135.4 L1607.3,141.7 L1594.2,146.5Z M-708.4,189.7 L-702.5,188.6 L-699.2,204.7 L-702.5,207.3 L-705.8,196.8Z M470.2,189.7 L476.1,188.6 L479.4,204.7 L476.1,207.3 L472.9,196.8Z M1648.9,189.7 L1654.8,188.6 L1658.0,204.7 L1654.8,207.3 L1651.5,196.8Z M-684.5,226.2 L-674.7,217.4 L-661.6,216.9 L-660.0,227.1 L-669.8,227.1Z M494.1,226.2 L504.0,217.4 L517.0,216.9 L518.7,227.1 L508.9,227.1Z M1672.8,226.2 L1682.6,217.4 L1695.7,216.9 L1697.3,227.1 L1687.5,227.1Z M-670.8,249.0 L-668.8,231.8 L-661.6,229.5 L-663.2,238.7 L-666.5,248.6Z M507.9,249.0 L509.8,231.8 L517.0,229.5 L515.4,238.7 L512.1,248.6Z M1686.5,249.0 L1688.5,231.8 L1695.7,229.5 L1694.1,238.7 L1690.8,248.6Z M-660.0,229.5 L-645.2,229.5 L-650.5,236.5 L-653.1,243.3 L-656.7,238.7Z M518.7,229.5 L533.4,229.5 L528.2,236.5 L525.6,243.3 L522.0,238.7Z M1697.3,229.5 L1712.1,229.5 L1706.8,236.5 L1704.2,243.3 L1700.6,238.7Z M-656.4,249.0 L-641.6,243.7 L-644.6,246.4 L-653.4,250.3Z M522.3,249.0 L537.0,243.7 L534.1,246.4 L525.2,250.3Z M1700.9,249.0 L1715.7,243.7 L1712.7,246.4 L1703.9,250.3Z M-644.6,241.9 L-632.8,237.8 L-633.1,241.5 L-641.9,242.4Z M534.1,241.9 L545.9,237.8 L545.5,241.5 L536.7,242.4Z M1712.7,241.9 L1724.5,237.8 L1724.2,241.5 L1715.3,242.4Z M-279.2,401.1 L-273.6,398.5 L-271.3,402.8 L-275.3,408.7 L-279.5,404.4Z M899.5,401.1 L905.0,398.5 L907.3,402.8 L903.4,408.7 L899.1,404.4Z M2078.1,401.1 L2083.7,398.5 L2085.9,402.8 L2082.0,408.7 L2077.8,404.4Z M-285.1,152.4 L-275.9,145.8 L-278.5,140.3 L-285.1,145.8Z M893.6,152.4 L902.7,145.8 L900.1,140.3 L893.6,145.8Z M2072.2,152.4 L2081.4,145.8 L2078.7,140.3 L2072.2,145.8Z M-43.5,201.6 L-34.6,196.8 L-24.8,180.1 L-25.8,178.4 L-37.9,194.1Z M1135.2,201.6 L1144.0,196.8 L1153.8,180.1 L1152.9,178.4 L1140.7,194.1Z M2313.8,201.6 L2322.7,196.8 L2332.5,180.1 L2331.5,178.4 L2319.4,194.1Z" fill="#b1c7ee"/>
</g>
<g filter="url(#bl2)" opacity="0.55"><path d="M45.3,281.0 L50.5,279.8 L58.7,278.6 L64.9,278.6 L66.9,278.2 L74.4,277.0 L78.0,274.2 L78.0,271.0 L80.0,263.6 L81.6,256.4 L80.0,250.8 L75.1,253.4 L74.4,260.6 L70.1,266.9 L64.3,267.7 L62.0,273.0 L60.3,275.0 L52.1,275.0 L47.2,278.2Z M1223.9,281.0 L1229.1,279.8 L1237.3,278.6 L1243.5,278.6 L1245.5,278.2 L1253.0,277.0 L1256.6,274.2 L1256.6,271.0 L1258.6,263.6 L1260.2,256.4 L1258.6,250.8 L1253.7,253.4 L1253.0,260.6 L1248.8,266.9 L1242.9,267.7 L1240.6,273.0 L1239.0,275.0 L1230.8,275.0 L1225.9,278.2Z M2402.5,281.0 L2407.8,279.8 L2416.0,278.6 L2422.2,278.6 L2424.2,278.2 L2431.7,277.0 L2435.3,274.2 L2435.3,271.0 L2437.2,263.6 L2438.9,256.4 L2437.2,250.8 L2432.3,253.4 L2431.7,260.6 L2427.4,266.9 L2421.5,267.7 L2419.2,273.0 L2417.6,275.0 L2409.4,275.0 L2404.5,278.2Z M42.3,283.0 L45.6,281.4 L48.5,284.5 L47.2,290.7 L46.6,291.5 L43.0,291.9 L41.7,286.1Z M1221.0,283.0 L1224.2,281.4 L1227.2,284.5 L1225.9,290.7 L1225.2,291.5 L1221.6,291.9 L1220.3,286.1Z M2399.6,283.0 L2402.9,281.4 L2405.8,284.5 L2404.5,290.7 L2403.9,291.5 L2400.3,291.9 L2398.9,286.1Z M50.5,281.8 L57.1,280.2 L57.7,281.8 L52.1,285.7Z M1229.1,281.8 L1235.7,280.2 L1236.3,281.8 L1230.8,285.7Z M2407.8,281.8 L2414.3,280.2 L2415.0,281.8 L2409.4,285.7Z M75.1,249.9 L79.0,248.6 L85.9,247.7 L94.0,241.9 L89.8,238.7 L81.0,231.8 L80.0,241.0 L75.1,245.5Z M1253.7,249.9 L1257.6,248.6 L1264.5,247.7 L1272.7,241.9 L1268.4,238.7 L1259.6,231.8 L1258.6,241.0 L1253.7,245.5Z M2432.3,249.9 L2436.3,248.6 L2443.1,247.7 L2451.3,241.9 L2447.1,238.7 L2438.2,231.8 L2437.2,241.0 L2432.3,245.5Z M81.6,229.5 L86.5,225.7 L84.9,212.4 L89.8,213.9 L84.9,188.6 L83.2,186.9 L81.6,204.7 L81.0,219.9Z M1260.2,229.5 L1265.2,225.7 L1263.5,212.4 L1268.4,213.9 L1263.5,188.6 L1261.9,186.9 L1260.2,204.7 L1259.6,219.9Z M2438.9,229.5 L2443.8,225.7 L2442.2,212.4 L2447.1,213.9 L2442.2,188.6 L2440.5,186.9 L2438.9,204.7 L2438.2,219.9Z M9.9,322.1 L12.9,326.0 L15.8,316.4 L14.5,313.8 L10.6,316.7Z M1188.5,322.1 L1191.5,326.0 L1194.4,316.4 L1193.1,313.8 L1189.2,316.7Z M2367.2,322.1 L2370.1,326.0 L2373.1,316.4 L2371.8,313.8 L2367.8,316.7Z M-27.7,335.4 L-21.5,332.3 L-19.9,334.0 L-24.8,338.9Z M1150.9,335.4 L1157.1,332.3 L1158.8,334.0 L1153.8,338.9Z M2329.5,335.4 L2335.8,332.3 L2337.4,334.0 L2332.5,338.9Z M11.2,337.8 L17.1,338.2 L16.1,344.7 L14.8,349.8 L22.7,353.9 L19.4,357.2 L15.8,354.9 L11.5,352.2 L8.9,345.4Z M1189.9,337.8 L1195.7,338.2 L1194.8,344.7 L1193.5,349.8 L1201.3,353.9 L1198.0,357.2 L1194.4,354.9 L1190.2,352.2 L1187.6,345.4Z M2368.5,337.8 L2374.4,338.2 L2373.4,344.7 L2372.1,349.8 L2380.0,353.9 L2376.7,357.2 L2373.1,354.9 L2368.8,352.2 L2366.2,345.4Z M16.1,376.5 L21.0,373.2 L27.6,367.6 L30.9,375.9 L27.3,381.1 L22.7,378.2Z M1194.8,376.5 L1199.7,373.2 L1206.2,367.6 L1209.5,375.9 L1205.9,381.1 L1201.3,378.2Z M2373.4,376.5 L2378.3,373.2 L2384.9,367.6 L2388.1,375.9 L2384.5,381.1 L2380.0,378.2Z M16.1,360.6 L21.0,364.9 L25.9,361.6 L27.6,358.2 L24.3,358.2 L19.4,359.9Z M1194.8,360.6 L1199.7,364.9 L1204.6,361.6 L1206.2,358.2 L1203.0,358.2 L1198.0,359.9Z M2373.4,360.6 L2378.3,364.9 L2383.2,361.6 L2384.9,358.2 L2381.6,358.2 L2376.7,359.9Z M0.4,371.9 L7.9,361.9 L8.3,363.9 L1.7,372.6Z M1179.1,371.9 L1186.6,361.9 L1186.9,363.9 L1180.4,372.6Z M2357.7,371.9 L2365.2,361.9 L2365.5,363.9 L2359.0,372.6Z M-26.4,394.6 L-24.5,402.8 L-22.5,409.0 L-16.6,411.0 L-8.4,412.0 L-3.5,411.0 L-1.9,402.8 L2.7,396.2 L6.3,396.2 L2.4,386.4 L7.3,382.1 L1.4,376.9 L-3.5,378.5 L-6.8,383.1 L-13.3,389.0 L-19.9,392.0 L-24.5,393.0Z M1152.2,394.6 L1154.2,402.8 L1156.1,409.0 L1162.0,411.0 L1170.2,412.0 L1175.1,411.0 L1176.8,402.8 L1181.3,396.2 L1184.9,396.2 L1181.0,386.4 L1185.9,382.1 L1180.0,376.9 L1175.1,378.5 L1171.8,383.1 L1165.3,389.0 L1158.8,392.0 L1154.2,393.0Z M2330.8,394.6 L2332.8,402.8 L2334.8,409.0 L2340.7,411.0 L2348.9,412.0 L2353.8,411.0 L2355.4,402.8 L2360.0,396.2 L2363.6,396.2 L2359.7,386.4 L2364.6,382.1 L2358.7,376.9 L2353.8,378.5 L2350.5,383.1 L2343.9,389.0 L2337.4,392.0 L2332.8,393.0Z M-71.3,381.1 L-64.1,382.5 L-54.9,392.0 L-51.0,394.6 L-43.5,402.8 L-36.3,410.0 L-36.9,418.5 L-40.8,418.9 L-48.4,412.6 L-54.9,402.1 L-60.2,393.9 L-67.4,388.0Z M1107.4,381.1 L1114.6,382.5 L1123.7,392.0 L1127.7,394.6 L1135.2,402.8 L1142.4,410.0 L1141.7,418.5 L1137.8,418.9 L1130.3,412.6 L1123.7,402.1 L1118.5,393.9 L1111.3,388.0Z M2286.0,381.1 L2293.2,382.5 L2302.4,392.0 L2306.3,394.6 L2313.8,402.8 L2321.0,410.0 L2320.4,418.5 L2316.4,418.9 L2308.9,412.6 L2302.4,402.1 L2297.1,393.9 L2289.9,388.0Z M-38.9,421.8 L-34.6,419.2 L-28.1,420.8 L-21.5,422.1 L-14.3,422.1 L-8.4,425.1 L-9.1,427.8 L-23.2,426.1 L-34.9,423.8Z M1139.8,421.8 L1144.0,419.2 L1150.6,420.8 L1157.1,422.1 L1164.3,422.1 L1170.2,425.1 L1169.6,427.8 L1155.5,426.1 L1143.7,423.8Z M2318.4,421.8 L2322.7,419.2 L2329.2,420.8 L2335.8,422.1 L2343.0,422.1 L2348.9,425.1 L2348.2,427.8 L2334.1,426.1 L2322.3,423.8Z M7.9,417.5 L5.7,409.3 L8.9,399.5 L12.2,395.2 L25.6,394.3 L12.9,397.9 L20.1,402.4 L13.8,405.4 L20.1,414.9 L14.5,413.9 L10.9,417.9Z M1186.6,417.5 L1184.3,409.3 L1187.6,399.5 L1190.8,395.2 L1204.3,394.3 L1191.5,397.9 L1198.7,402.4 L1192.5,405.4 L1198.7,414.9 L1193.1,413.9 L1189.5,417.9Z M2365.2,417.5 L2362.9,409.3 L2366.2,399.5 L2369.5,395.2 L2382.9,394.3 L2370.1,397.9 L2377.3,402.4 L2371.1,405.4 L2377.3,414.9 L2371.8,413.9 L2368.2,417.9Z M-5.2,426.8 L6.3,426.8 L16.1,426.8 L25.9,426.4 L32.5,427.4 L22.7,433.4 L9.6,432.4 L-3.5,429.1Z M1173.5,426.8 L1184.9,426.8 L1194.8,426.8 L1204.6,426.4 L1211.1,427.4 L1201.3,433.4 L1188.2,432.4 L1175.1,429.1Z M2352.1,426.8 L2363.6,426.8 L2373.4,426.8 L2383.2,426.4 L2389.8,427.4 L2380.0,433.4 L2366.9,432.4 L2353.8,429.1Z M45.6,402.1 L55.4,402.8 L60.3,410.3 L67.9,404.4 L78.3,408.0 L88.2,412.0 L94.0,415.9 L100.6,419.2 L101.3,425.8 L110.4,433.4 L104.5,433.4 L98.3,430.7 L94.7,425.8 L86.5,426.4 L83.2,430.1 L78.3,429.4 L71.8,426.1 L68.5,426.8 L66.9,415.9 L57.1,412.6 L51.2,412.6 L46.6,409.3 L48.9,407.7 L44.0,404.7Z M1224.2,402.1 L1234.1,402.8 L1239.0,410.3 L1246.5,404.4 L1257.0,408.0 L1266.8,412.0 L1272.7,415.9 L1279.2,419.2 L1279.9,425.8 L1289.1,433.4 L1283.2,433.4 L1276.9,430.7 L1273.3,425.8 L1265.2,426.4 L1261.9,430.1 L1257.0,429.4 L1250.4,426.1 L1247.2,426.8 L1245.5,415.9 L1235.7,412.6 L1229.8,412.6 L1225.2,409.3 L1227.5,407.7 L1222.6,404.7Z M2402.9,402.1 L2412.7,402.8 L2417.6,410.3 L2425.1,404.4 L2435.6,408.0 L2445.4,412.0 L2451.3,415.9 L2457.9,419.2 L2458.5,425.8 L2467.7,433.4 L2461.8,433.4 L2455.6,430.7 L2452.0,425.8 L2443.8,426.4 L2440.5,430.1 L2435.6,429.4 L2429.1,426.1 L2425.8,426.8 L2424.2,415.9 L2414.3,412.6 L2408.4,412.6 L2403.9,409.3 L2406.1,407.7 L2401.2,404.7Z M102.9,417.5 L112.7,413.6 L115.3,414.2 L109.4,419.8Z M1281.5,417.5 L1291.3,413.6 L1294.0,414.2 L1288.1,419.8Z M2460.2,417.5 L2470.0,413.6 L2472.6,414.2 L2466.7,419.8Z M-221.9,439.1 L-219.6,444.1 L-218.0,450.9 L-220.3,452.6 L-221.2,457.7 L-224.5,468.1 L-227.8,478.7 L-229.4,483.4 L-234.3,485.9 L-239.2,483.4 L-240.6,478.0 L-241.5,471.6 L-238.3,464.6 L-239.2,457.7 L-238.3,454.3 L-232.7,451.9 L-227.8,447.5 L-226.1,444.1Z M956.7,439.1 L959.0,444.1 L960.7,450.9 L958.4,452.6 L957.4,457.7 L954.1,468.1 L950.9,478.7 L949.2,483.4 L944.3,485.9 L939.4,483.4 L938.1,478.0 L937.1,471.6 L940.4,464.6 L939.4,457.7 L940.4,454.3 L945.9,451.9 L950.9,447.5 L952.5,444.1Z M2135.4,439.1 L2137.7,444.1 L2139.3,450.9 L2137.0,452.6 L2136.0,457.7 L2132.8,468.1 L2129.5,478.7 L2127.9,483.4 L2122.9,485.9 L2118.0,483.4 L2116.7,478.0 L2115.7,471.6 L2119.0,464.6 L2118.0,457.7 L2119.0,454.3 L2124.6,451.9 L2129.5,447.5 L2131.1,444.1Z M-122.0,367.3 L-118.8,369.9 L-115.5,374.9 L-117.1,379.2 L-121.1,379.8 L-122.0,371.6Z M1056.6,367.3 L1059.9,369.9 L1063.2,374.9 L1061.5,379.2 L1057.6,379.8 L1056.6,371.6Z M2235.2,367.3 L2238.5,369.9 L2241.8,374.9 L2240.2,379.2 L2236.2,379.8 L2235.2,371.6Z M182.1,519.6 L184.7,522.0 L189.0,528.0 L191.3,530.1 L192.9,532.5 L201.1,533.0 L199.5,540.5 L195.9,540.9 L190.3,549.5 L188.3,541.8 L185.7,539.2 L188.0,530.1Z M1360.8,519.6 L1363.4,522.0 L1367.6,528.0 L1369.9,530.1 L1371.6,532.5 L1379.7,533.0 L1378.1,540.5 L1374.5,540.9 L1368.9,549.5 L1367.0,541.8 L1364.4,539.2 L1366.7,530.1Z M2539.4,519.6 L2542.0,522.0 L2546.3,528.0 L2548.6,530.1 L2550.2,532.5 L2558.4,533.0 L2556.8,540.5 L2553.1,540.9 L2547.6,549.5 L2545.6,541.8 L2543.0,539.2 L2545.3,530.1Z M182.1,544.8 L187.4,548.2 L184.7,555.3 L182.4,559.3 L177.5,562.1 L175.2,569.0 L170.0,572.4 L161.8,569.5 L165.1,561.6 L174.9,554.4 L179.8,548.7Z M1360.8,544.8 L1366.0,548.2 L1363.4,555.3 L1361.1,559.3 L1356.2,562.1 L1353.9,569.0 L1348.6,572.4 L1340.5,569.5 L1343.7,561.6 L1353.6,554.4 L1358.5,548.7Z M2539.4,544.8 L2544.6,548.2 L2542.0,555.3 L2539.7,559.3 L2534.8,562.1 L2532.5,569.0 L2527.3,572.4 L2519.1,569.5 L2522.4,561.6 L2532.2,554.4 L2537.1,548.7Z M90.4,545.6 L96.3,547.4 L102.2,546.5 L101.9,552.6 L98.0,558.4 L93.1,555.7 L90.4,545.6Z M1269.1,545.6 L1275.0,547.4 L1280.9,546.5 L1280.5,552.6 L1276.6,558.4 L1271.7,555.7 L1269.1,545.6Z M2447.7,545.6 L2453.6,547.4 L2459.5,546.5 L2459.2,552.6 L2455.3,558.4 L2450.3,555.7 L2447.7,545.6Z M-661.6,326.3 L-651.8,321.4 L-641.9,323.2 L-635.4,326.3 L-626.2,331.9 L-637.7,333.0 L-640.3,327.4 L-648.5,326.3 L-653.4,327.0Z M517.0,326.3 L526.9,321.4 L536.7,323.2 L543.2,326.3 L552.4,331.9 L540.9,333.0 L538.3,327.4 L530.1,326.3 L525.2,327.0Z M1695.7,326.3 L1705.5,321.4 L1715.3,323.2 L1721.9,326.3 L1731.0,331.9 L1719.6,333.0 L1717.0,327.4 L1708.8,326.3 L1703.9,327.0Z M-627.2,338.2 L-621.6,333.0 L-612.5,333.7 L-607.2,337.5 L-616.7,340.9 L-625.6,339.6Z M551.4,338.2 L557.0,333.0 L566.2,333.7 L571.4,337.5 L561.9,340.9 L553.1,339.6Z M1730.1,338.2 L1735.6,333.0 L1744.8,333.7 L1750.0,337.5 L1740.5,340.9 L1731.7,339.6Z M-639.7,338.5 L-632.8,339.9 L-635.4,340.6Z M539.0,338.5 L545.9,339.9 L543.2,340.6Z M1717.6,338.5 L1724.5,339.9 L1721.9,340.6Z M-603.3,337.8 L-598.1,338.5 L-602.7,339.9Z M575.3,337.8 L580.6,338.5 L576.0,339.9Z M1754.0,337.8 L1759.2,338.5 L1754.6,339.9Z M-342.7,264.8 L-332.2,263.6 L-333.9,270.2 L-342.4,266.9Z M835.9,264.8 L846.4,263.6 L844.8,270.2 L836.3,266.9Z M2014.6,264.8 L2025.1,263.6 L2023.4,270.2 L2014.9,266.9Z M-356.5,252.1 L-351.2,252.1 L-351.9,260.6 L-355.8,260.6Z M822.2,252.1 L827.4,252.1 L826.8,260.6 L822.8,260.6Z M2000.8,252.1 L2006.1,252.1 L2005.4,260.6 L2001.5,260.6Z M-355.1,243.7 L-352.5,243.3 L-352.2,249.9 L-354.5,249.9Z M823.5,243.7 L826.1,243.3 L826.4,249.9 L824.2,249.9Z M2002.1,243.7 L2004.8,243.3 L2005.1,249.9 L2002.8,249.9Z M-306.4,275.8 L-297.2,275.8 L-298.2,277.0 L-306.0,276.2Z M872.3,275.8 L881.4,275.8 L880.5,277.0 L872.6,276.2Z M2050.9,275.8 L2060.1,275.8 L2059.1,277.0 L2051.2,276.2Z M-277.6,277.0 L-270.3,274.6 L-272.6,278.6 L-276.9,278.2Z M901.1,277.0 L908.3,274.6 L906.0,278.6 L901.7,278.2Z M2079.7,277.0 L2086.9,274.6 L2084.6,278.6 L2080.4,278.2Z" fill="#f2f1ec"/></g>

<text x="357.4" y="200.1" font-size="25" font-weight="700" fill="#1e1e1e" textLength="220.8" lengthAdjust="spacingAndGlyphs" font-family="Liberation Sans" stroke="#ffffff" stroke-opacity="0.55" stroke-width="2.2" paint-order="stroke" stroke-linejoin="round">NORTH AMERICA</text>
<text x="823.0" y="214.0" font-size="25" font-weight="700" fill="#1e1e1e" textLength="100.6" lengthAdjust="spacingAndGlyphs" font-family="Liberation Sans" stroke="#ffffff" stroke-opacity="0.55" stroke-width="2.2" paint-order="stroke" stroke-linejoin="round">EUROPE</text>
<text x="1105.6" y="190.7" font-size="25" font-weight="700" fill="#1e1e1e" textLength="58.0" lengthAdjust="spacingAndGlyphs" font-family="Liberation Sans" stroke="#ffffff" stroke-opacity="0.55" stroke-width="2.2" paint-order="stroke" stroke-linejoin="round">ASIA</text>
<text x="831.7" y="388.2" font-size="25" font-weight="700" fill="#1e1e1e" textLength="91.9" lengthAdjust="spacingAndGlyphs" font-family="Liberation Sans" stroke="#ffffff" stroke-opacity="0.55" stroke-width="2.2" paint-order="stroke" stroke-linejoin="round">AFRICA</text>
<text x="519.5" y="461.9" font-size="25.5" font-weight="700" fill="#1e1e1e" textLength="218.0" lengthAdjust="spacingAndGlyphs" font-family="Liberation Sans" stroke="#ffffff" stroke-opacity="0.55" stroke-width="2.2" paint-order="stroke" stroke-linejoin="round">SOUTH AMERICA</text>
<text x="4.8" y="481.0" font-size="26" font-weight="700" fill="#1e1e1e" textLength="144.8" lengthAdjust="spacingAndGlyphs" font-family="Liberation Sans" stroke="#ffffff" stroke-opacity="0.55" stroke-width="2.2" paint-order="stroke" stroke-linejoin="round">AUSTRALIA</text>
<text x="1181.9" y="480.4" font-size="26" font-weight="700" fill="#1e1e1e" textLength="144.2" lengthAdjust="spacingAndGlyphs" font-family="Liberation Sans" stroke="#ffffff" stroke-opacity="0.55" stroke-width="2.2" paint-order="stroke" stroke-linejoin="round">AUSTRALIA</text>
<text x="1535.1" y="199.9" font-size="25" font-weight="700" fill="#1e1e1e" font-family="Liberation Sans" stroke="#ffffff" stroke-opacity="0.55" stroke-width="2.2" paint-order="stroke" stroke-linejoin="round">NOR</text>
<text x="211.3" y="285.2" font-size="24" fill="#4f69a3" stroke="#4f69a3" stroke-width="0.3" textLength="86.5" lengthAdjust="spacing" font-family="Liberation Sans">Pacific</text>
<text x="214.6" y="312.3" font-size="24" fill="#4f69a3" stroke="#4f69a3" stroke-width="0.3" textLength="80.6" lengthAdjust="spacing" font-family="Liberation Sans">Ocean</text>
<text x="1389.0" y="284.7" font-size="24" fill="#4f69a3" stroke="#4f69a3" stroke-width="0.3" textLength="85.3" lengthAdjust="spacing" font-family="Liberation Sans">Pacific</text>
<text x="1392.7" y="312.5" font-size="24" fill="#4f69a3" stroke="#4f69a3" stroke-width="0.3" textLength="80.0" lengthAdjust="spacing" font-family="Liberation Sans">Ocean</text>
<text x="607.3" y="290.1" font-size="24" fill="#4f69a3" stroke="#4f69a3" stroke-width="0.3" textLength="103.2" lengthAdjust="spacing" font-family="Liberation Sans">Atlantic</text>
<text x="619.3" y="317.3" font-size="24" fill="#4f69a3" stroke="#4f69a3" stroke-width="0.3" textLength="81.2" lengthAdjust="spacing" font-family="Liberation Sans">Ocean</text>
<text x="1014.9" y="464.5" font-size="24" fill="#4f69a3" stroke="#4f69a3" stroke-width="0.3" textLength="80.1" lengthAdjust="spacing" font-family="Liberation Sans">Indian</text>
<text x="1015.6" y="491.7" font-size="24" fill="#4f69a3" stroke="#4f69a3" stroke-width="0.3" textLength="79.4" lengthAdjust="spacing" font-family="Liberation Sans">Ocean</text>
<circle cx="1099.2" cy="84.2" r="6.7" fill="#7b79c3" stroke="#11106a" stroke-width="2"/>
<circle cx="1147.7" cy="192.4" r="6.7" fill="#7b79c3" stroke="#11106a" stroke-width="2"/>
<circle cx="1247.0" cy="216.0" r="6.7" fill="#7b79c3" stroke="#11106a" stroke-width="2"/>
<circle cx="390.3" cy="220.6" r="6.7" fill="#7b79c3" stroke="#11106a" stroke-width="2"/>
<circle cx="409.0" cy="233.3" r="6.7" fill="#7b79c3" stroke="#11106a" stroke-width="2"/>
<circle cx="432.3" cy="236.0" r="6.7" fill="#7b79c3" stroke="#11106a" stroke-width="2"/>
<circle cx="390.3" cy="250.6" r="6.7" fill="#7b79c3" stroke="#11106a" stroke-width="2"/>
<circle cx="405.0" cy="265.9" r="6.7" fill="#7b79c3" stroke="#11106a" stroke-width="2"/>
<circle cx="522.1" cy="274.5" r="6.7" fill="#7b79c3" stroke="#11106a" stroke-width="2"/>
<circle cx="596.0" cy="353.7" r="6.7" fill="#7b79c3" stroke="#11106a" stroke-width="2"/>
<circle cx="1057.0" cy="295.2" r="6.7" fill="#7b79c3" stroke="#11106a" stroke-width="2"/>
<circle cx="1096.0" cy="309.7" r="6.7" fill="#7b79c3" stroke="#11106a" stroke-width="2"/>
<circle cx="1086.2" cy="326.2" r="6.7" fill="#7b79c3" stroke="#11106a" stroke-width="2"/>
<circle cx="1120.0" cy="348.4" r="6.7" fill="#7b79c3" stroke="#11106a" stroke-width="2"/>
<circle cx="1129.3" cy="352.4" r="6.7" fill="#7b79c3" stroke="#11106a" stroke-width="2"/>
<circle cx="1176.6" cy="379.2" r="6.7" fill="#7b79c3" stroke="#11106a" stroke-width="2"/>
<circle cx="1171.4" cy="386.2" r="6.7" fill="#7b79c3" stroke="#11106a" stroke-width="2"/>
<circle cx="1228.3" cy="442.9" r="6.7" fill="#7b79c3" stroke="#11106a" stroke-width="2"/>
<circle cx="1272.3" cy="458.2" r="6.7" fill="#7b79c3" stroke="#11106a" stroke-width="2"/>
<circle cx="1235.0" cy="486.9" r="6.7" fill="#7b79c3" stroke="#11106a" stroke-width="2"/>
<circle cx="1296.2" cy="485.5" r="6.7" fill="#7b79c3" stroke="#11106a" stroke-width="2"/>
<circle cx="1274.9" cy="551.4" r="6.7" fill="#7b79c3" stroke="#11106a" stroke-width="2"/>
<g transform="translate(12.399999999999999,589.4)"><rect x="0" y="0" width="11" height="11" fill="#e8702a"/><rect x="11.7" y="0" width="11" height="11" fill="#9bc850"/><rect x="0" y="11.7" width="11" height="11" fill="#4aa8e8"/><rect x="11.7" y="11.7" width="11" height="11" fill="#f5c040"/></g>
<text x="41.2" y="607.9" font-size="19.5" font-weight="400" fill="#6e6e6e" textLength="118.1" lengthAdjust="spacingAndGlyphs" font-family="Liberation Sans" >Microsoft Bing</text>
<text x="850.0" y="613.9" font-size="21" font-weight="400" fill="#111" textLength="438.0" lengthAdjust="spacingAndGlyphs" font-family="Liberation Sans" style="text-shadow:1px 1px 0 #fff">© 2024 TomTom, © 2024 Microsoft Corporation,</text>
<text x="1295.0" y="613.9" font-size="21" font-weight="400" fill="#2f3d9c" textLength="167.5" lengthAdjust="spacingAndGlyphs" font-family="Liberation Sans" style="text-shadow:1px 1px 0 #fff">© OpenStreetMap</text>
<text x="1478.6" y="613.9" font-size="21" font-weight="400" fill="#2f3d9c" textLength="55.4" lengthAdjust="spacingAndGlyphs" font-family="Liberation Sans" style="text-shadow:1px 1px 0 #fff">Terms</text>
<rect x="1295" y="616" width="167.5" height="1.3" fill="#2f3d9c"/><rect x="1478.6" y="616" width="55.4" height="1.3" fill="#2f3d9c"/>
</svg>
<div class="a" style="left:0px;top:1006px;width:1634px;height:705px;background:#424558;"></div>
<div class="t" style="top:1005.83px;font-size:38px;color:#fff;font-weight:700;left:-184.00px;width:2000px;text-align:center;transform:scaleX(0.925);transform-origin:50% 0;">Conservation Info</div>
<div class="a" style="left:0px;top:1053px;width:1634px;height:658px;background:#fff;box-shadow:inset 0 0 30px rgba(150,175,180,.35)"></div>
<div class="a" style="left:14px;top:1054px;width:1586px;height:64px;background:#acaad4;"></div>
<div class="a" style="left:14px;top:1116.5px;width:1586px;height:2px;background:#3b82f0;"></div>
<div class="t" style="top:1064.30px;font-size:28px;color:#252423;font-weight:700;left:26.00px;transform:scaleX(1.0126);transform-origin:0 0;">FY Year</div>
<svg class="a" style="left:24px;top:1097px" width="26" height="16"><path d="M2,1.4 H23 L12.5,12.8Z" fill="#252423"/></svg>
<div class="t" style="top:1064.30px;font-size:28px;color:#252423;font-weight:700;left:198.00px;transform:scaleX(1.0936);transform-origin:0 0;">Area Name</div>
<div class="t" style="top:1064.30px;font-size:28px;color:#252423;font-weight:700;left:794.70px;transform:scaleX(1.0665);transform-origin:0 0;">Conservation Type</div>
<div class="t" style="top:1064.30px;font-size:28px;color:#252423;font-weight:700;left:1186.00px;transform:scaleX(1.1022);transform-origin:0 0;">UOM</div>
<div class="t" style="top:1064.30px;font-size:28px;color:#252423;font-weight:700;left:1362.00px;transform:scaleX(1.052);transform-origin:0 0;">Area</div>
<div class="a" style="left:782px;top:1054px;width:1.5px;height:63px;background:#c0bedf;"></div>
<div class="a" style="left:1349px;top:1054px;width:1.5px;height:63px;background:#c0bedf;"></div>
<div class="a" style="left:14px;top:1118.5px;width:1586px;height:48.36px;background:#ffffff;"></div>
<div class="a" style="left:14px;top:1164.9px;width:1586px;height:2px;background:#b4b2dc;"></div>
<div class="t" style="top:1129.61px;font-size:30px;color:#252423;font-weight:400;left:25.00px;transform:scaleX(0.99);transform-origin:0 0;">2023-2024</div>
<div class="t" style="top:1129.61px;font-size:30px;color:#252423;font-weight:400;left:198.00px;transform:scaleX(1.0116);transform-origin:0 0;">Central Sikhote-Alin</div>
<div class="t" style="top:1129.61px;font-size:30px;color:#252423;font-weight:400;left:795.40px;transform:scaleX(1.002);transform-origin:0 0;">High Carbon Stock</div>
<div class="t" style="top:1129.61px;font-size:30px;color:#252423;font-weight:400;left:1186.00px;transform:scaleX(0.956);transform-origin:0 0;">hectares</div>
<div class="t" style="top:1129.61px;font-size:30px;color:#252423;font-weight:400;left:-410.00px;width:2000px;text-align:right;transform:scaleX(0.953);transform-origin:100% 0;">383,160.33</div>
<div class="a" style="left:14px;top:1166.9px;width:1586px;height:48.36px;background:#ececec;"></div>
<div class="a" style="left:14px;top:1213.2px;width:1586px;height:2px;background:#b4b2dc;"></div>
<div class="t" style="top:1177.96px;font-size:30px;color:#252423;font-weight:400;left:25.00px;transform:scaleX(0.99);transform-origin:0 0;">2023-2024</div>
<div class="t" style="top:1177.96px;font-size:30px;color:#252423;font-weight:400;left:198.00px;transform:scaleX(0.988);transform-origin:0 0;">Dong Phayayen-Khao Yai Forest Complex</div>
<div class="t" style="top:1177.96px;font-size:30px;color:#252423;font-weight:400;left:795.40px;transform:scaleX(1.002);transform-origin:0 0;">High Carbon Stock</div>
<div class="t" style="top:1177.96px;font-size:30px;color:#252423;font-weight:400;left:1186.00px;transform:scaleX(0.956);transform-origin:0 0;">hectares</div>
<div class="t" style="top:1177.96px;font-size:30px;color:#252423;font-weight:400;left:-410.00px;width:2000px;text-align:right;transform:scaleX(0.953);transform-origin:100% 0;">151,767.12</div>
<div class="a" style="left:14px;top:1215.2px;width:1586px;height:48.36px;background:#ffffff;"></div>
<div class="a" style="left:14px;top:1261.6px;width:1586px;height:2px;background:#b4b2dc;"></div>
<div class="t" style="top:1226.33px;font-size:30px;color:#252423;font-weight:400;left:25.00px;transform:scaleX(0.99);transform-origin:0 0;">2023-2024</div>
<div class="t" style="top:1226.33px;font-size:30px;color:#252423;font-weight:400;left:198.00px;transform:scaleX(0.9539);transform-origin:0 0;">Fraser Island</div>
<div class="t" style="top:1226.33px;font-size:30px;color:#252423;font-weight:400;left:795.40px;transform:scaleX(1.0071);transform-origin:0 0;">High Conservation Value</div>
<div class="t" style="top:1226.33px;font-size:30px;color:#252423;font-weight:400;left:1186.00px;transform:scaleX(0.956);transform-origin:0 0;">hectares</div>
<div class="t" style="top:1226.33px;font-size:30px;color:#252423;font-weight:400;left:-410.00px;width:2000px;text-align:right;transform:scaleX(0.953);transform-origin:100% 0;">40,832.88</div>
<div class="a" style="left:14px;top:1263.6px;width:1586px;height:48.36px;background:#ececec;"></div>
<div class="a" style="left:14px;top:1309.9px;width:1586px;height:2px;background:#b4b2dc;"></div>
<div class="t" style="top:1274.68px;font-size:30px;color:#252423;font-weight:400;left:25.00px;transform:scaleX(0.99);transform-origin:0 0;">2023-2024</div>
<div class="t" style="top:1274.68px;font-size:30px;color:#252423;font-weight:400;left:198.00px;transform:scaleX(1.0029);transform-origin:0 0;">Greater Blue Mountains Area</div>
<div class="t" style="top:1274.68px;font-size:30px;color:#252423;font-weight:400;left:795.40px;transform:scaleX(1.002);transform-origin:0 0;">High Carbon Stock</div>
<div class="t" style="top:1274.68px;font-size:30px;color:#252423;font-weight:400;left:1186.00px;transform:scaleX(0.956);transform-origin:0 0;">hectares</div>
<div class="t" style="top:1274.68px;font-size:30px;color:#252423;font-weight:400;left:-410.00px;width:2000px;text-align:right;transform:scaleX(0.953);transform-origin:100% 0;">246,986.88</div>
<div class="a" style="left:14px;top:1311.9px;width:1586px;height:48.36px;background:#ffffff;"></div>
<div class="a" style="left:14px;top:1358.3px;width:1586px;height:2px;background:#b4b2dc;"></div>
<div class="t" style="top:1323.05px;font-size:30px;color:#252423;font-weight:400;left:25.00px;transform:scaleX(0.99);transform-origin:0 0;">2023-2024</div>
<div class="t" style="top:1323.05px;font-size:30px;color:#252423;font-weight:400;left:198.00px;transform:scaleX(0.9728);transform-origin:0 0;">Kinabalu Park</div>
<div class="t" style="top:1323.05px;font-size:30px;color:#252423;font-weight:400;left:795.40px;transform:scaleX(1.0071);transform-origin:0 0;">High Conservation Value</div>
<div class="t" style="top:1323.05px;font-size:30px;color:#252423;font-weight:400;left:1186.00px;transform:scaleX(0.956);transform-origin:0 0;">hectares</div>
<div class="t" style="top:1323.05px;font-size:30px;color:#252423;font-weight:400;left:-410.00px;width:2000px;text-align:right;transform:scaleX(0.953);transform-origin:100% 0;">13,009.07</div>
<div class="a" style="left:14px;top:1360.3px;width:1586px;height:48.36px;background:#ececec;"></div>
<div class="a" style="left:14px;top:1406.7px;width:1586px;height:2px;background:#b4b2dc;"></div>
<div class="t" style="top:1371.40px;font-size:30px;color:#252423;font-weight:400;left:25.00px;transform:scaleX(0.99);transform-origin:0 0;">2023-2024</div>
<div class="t" style="top:1371.40px;font-size:30px;color:#252423;font-weight:400;left:198.00px;transform:scaleX(1.0045);transform-origin:0 0;">Manas Wildlife Sanctuary</div>
<div class="t" style="top:1371.40px;font-size:30px;color:#252423;font-weight:400;left:795.40px;transform:scaleX(1.0071);transform-origin:0 0;">High Conservation Value</div>
<div class="t" style="top:1371.40px;font-size:30px;color:#252423;font-weight:400;left:1186.00px;transform:scaleX(0.956);transform-origin:0 0;">hectares</div>
<div class="t" style="top:1371.40px;font-size:30px;color:#252423;font-weight:400;left:-410.00px;width:2000px;text-align:right;transform:scaleX(0.953);transform-origin:100% 0;">6,170.30</div>
<div class="a" style="left:14px;top:1408.7px;width:1586px;height:48.36px;background:#ffffff;"></div>
<div class="a" style="left:14px;top:1455.0px;width:1586px;height:2px;background:#b4b2dc;"></div>
<div class="t" style="top:1419.76px;font-size:30px;color:#252423;font-weight:400;left:25.00px;transform:scaleX(0.99);transform-origin:0 0;">2023-2024</div>
<div class="t" style="top:1419.76px;font-size:30px;color:#252423;font-weight:400;left:198.00px;transform:scaleX(1.0092);transform-origin:0 0;">Olympic National Park</div>
<div class="t" style="top:1419.76px;font-size:30px;color:#252423;font-weight:400;left:795.40px;transform:scaleX(1.002);transform-origin:0 0;">High Carbon Stock</div>
<div class="t" style="top:1419.76px;font-size:30px;color:#252423;font-weight:400;left:1186.00px;transform:scaleX(0.956);transform-origin:0 0;">hectares</div>
<div class="t" style="top:1419.76px;font-size:30px;color:#252423;font-weight:400;left:-410.00px;width:2000px;text-align:right;transform:scaleX(0.953);transform-origin:100% 0;">91,149.04</div>
<div class="a" style="left:14px;top:1457.0px;width:1586px;height:48.36px;background:#ececec;"></div>
<div class="a" style="left:14px;top:1503.4px;width:1586px;height:2px;background:#b4b2dc;"></div>
<div class="t" style="top:1468.12px;font-size:30px;color:#252423;font-weight:400;left:25.00px;transform:scaleX(0.99);transform-origin:0 0;">2023-2024</div>
<div class="t" style="top:1468.12px;font-size:30px;color:#252423;font-weight:400;left:198.00px;transform:scaleX(0.9847);transform-origin:0 0;">Putorana Plateau</div>
<div class="t" style="top:1468.12px;font-size:30px;color:#252423;font-weight:400;left:795.40px;transform:scaleX(1.002);transform-origin:0 0;">High Carbon Stock</div>
<div class="t" style="top:1468.12px;font-size:30px;color:#252423;font-weight:400;left:1186.00px;transform:scaleX(0.956);transform-origin:0 0;">hectares</div>
<div class="t" style="top:1468.12px;font-size:30px;color:#252423;font-weight:400;left:-410.00px;width:2000px;text-align:right;transform:scaleX(0.953);transform-origin:100% 0;">139,604.79</div>
<div class="a" style="left:14px;top:1505.4px;width:1586px;height:48.36px;background:#ffffff;"></div>
<div class="a" style="left:14px;top:1551.7px;width:1586px;height:2px;background:#b4b2dc;"></div>
<div class="t" style="top:1516.49px;font-size:30px;color:#252423;font-weight:400;left:25.00px;transform:scaleX(0.99);transform-origin:0 0;">2023-2024</div>
<div class="t" style="top:1516.49px;font-size:30px;color:#252423;font-weight:400;left:198.00px;transform:scaleX(0.9902);transform-origin:0 0;">Sundarbans National Park</div>
<div class="t" style="top:1516.49px;font-size:30px;color:#252423;font-weight:400;left:795.40px;transform:scaleX(0.9986);transform-origin:0 0;">Others</div>
<div class="t" style="top:1516.49px;font-size:30px;color:#252423;font-weight:400;left:1186.00px;transform:scaleX(0.956);transform-origin:0 0;">hectares</div>
<div class="t" style="top:1516.49px;font-size:30px;color:#252423;font-weight:400;left:-410.00px;width:2000px;text-align:right;transform:scaleX(0.953);transform-origin:100% 0;">21,318.16</div>
<div class="a" style="left:14px;top:1553.7px;width:1586px;height:48.36px;background:#ececec;"></div>
<div class="a" style="left:14px;top:1600.1px;width:1586px;height:2px;background:#b4b2dc;"></div>
<div class="t" style="top:1564.85px;font-size:30px;color:#252423;font-weight:400;left:25.00px;transform:scaleX(0.99);transform-origin:0 0;">2023-2024</div>
<div class="t" style="top:1564.85px;font-size:30px;color:#252423;font-weight:400;left:198.00px;transform:scaleX(0.9815);transform-origin:0 0;">Tasmanian Wilderness</div>
<div class="t" style="top:1564.85px;font-size:30px;color:#252423;font-weight:400;left:795.40px;transform:scaleX(0.9986);transform-origin:0 0;">Others</div>
<div class="t" style="top:1564.85px;font-size:30px;color:#252423;font-weight:400;left:1186.00px;transform:scaleX(0.956);transform-origin:0 0;">hectares</div>
<div class="t" style="top:1564.85px;font-size:30px;color:#252423;font-weight:400;left:-410.00px;width:2000px;text-align:right;transform:scaleX(0.953);transform-origin:100% 0;">101,638.36</div>
<div class="a" style="left:14px;top:1602.1px;width:1586px;height:48.36px;background:#ffffff;"></div>
<div class="a" style="left:14px;top:1648.5px;width:1586px;height:2px;background:#b4b2dc;"></div>
<div class="t" style="top:1613.20px;font-size:30px;color:#252423;font-weight:400;left:25.00px;transform:scaleX(0.99);transform-origin:0 0;">2023-2024</div>
<div class="t" style="top:1613.20px;font-size:30px;color:#252423;font-weight:400;left:198.00px;transform:scaleX(1.0016);transform-origin:0 0;">Yellowstone National Park</div>
<div class="t" style="top:1613.20px;font-size:30px;color:#252423;font-weight:400;left:795.40px;transform:scaleX(0.9986);transform-origin:0 0;">Others</div>
<div class="t" style="top:1613.20px;font-size:30px;color:#252423;font-weight:400;left:1186.00px;transform:scaleX(0.956);transform-origin:0 0;">hectares</div>
<div class="t" style="top:1613.20px;font-size:30px;color:#252423;font-weight:400;left:-410.00px;width:2000px;text-align:right;transform:scaleX(0.953);transform-origin:100% 0;">177,208.52</div>
<div class="a" style="left:184px;top:1119px;width:2px;height:531px;background:#b4b2dc;"></div>
<div class="a" style="left:781px;top:1119px;width:2px;height:531px;background:#b4b2dc;"></div>
<div class="a" style="left:1170px;top:1119px;width:2px;height:531px;background:#b4b2dc;"></div>
<div class="a" style="left:1348px;top:1119px;width:2px;height:531px;background:#b4b2dc;"></div>
<div class="a" style="left:14px;top:1651px;width:1586px;height:2.6px;background:#3b82f0;"></div>
<div class="t" style="top:1664.90px;font-size:30px;color:#252423;font-weight:700;left:25.50px;transform:scaleX(1.0297);transform-origin:0 0;">Total</div>
<div class="t" style="top:1664.90px;font-size:30px;color:#252423;font-weight:700;left:-410.00px;width:2000px;text-align:right;transform:scaleX(1.0425);transform-origin:100% 0;">12,183,541.04</div>
<div class="a" style="left:184px;top:1653px;width:2px;height:46px;background:#b4b2dc;"></div>
<div class="a" style="left:781px;top:1653px;width:2px;height:46px;background:#b4b2dc;"></div>
<div class="a" style="left:1170px;top:1653px;width:2px;height:46px;background:#b4b2dc;"></div>
<div class="a" style="left:1348px;top:1653px;width:2px;height:46px;background:#b4b2dc;"></div>
<div class="a" style="left:1603px;top:1055px;width:19px;height:138px;background:#a9a9a9;border-radius:9px"></div>
<div class="a" style="left:1655px;top:250px;width:793px;height:340px;background:#414559;box-shadow:inset 0 0 46px rgba(95,128,150,.48)"></div>
<svg class="a" style="left:0;top:0" width="2992" height="1822"><g fill="#8fd0ea">
<path d="M1875.7,365.7 L1888.2,355.9 H1901.6 V443.9 H1888.2 V369.5 L1875.7,377.5Z"/>
<path d="M2034.3,365.7 L2046.8,355.9 H2060.2 V443.9 H2046.8 V369.5 L2034.3,377.5Z"/>
<rect x="1933.8" y="433.2" width="50.8" height="10.7"/>
<rect x="1998" y="431.4" width="13.4" height="12.5"/>
<path d="M2160.5,443.9 V355.9 H2173.5 L2198.6,413.9 L2223.9,355.9 H2236.4 V443.9 H2223.9 V387 L2204.5,431.8 H2192.7 L2173,387 V443.9Z"/>
</g><g fill="none" stroke="#8fd0ea">
<path d="M1940,381.8 A19.2,19.2 0 1 1 1973.9,394.1 L1940.5,436" stroke-width="12.3"/>
<ellipse cx="2117.2" cy="380.3" rx="18.75" ry="18.9" stroke-width="11.3"/>
<ellipse cx="2117.2" cy="419.15" rx="20.55" ry="19.95" stroke-width="11.8"/>
</g></svg>
<div class="t" style="top:490.80px;font-size:53.4px;color:#fff;font-weight:700;left:1052.00px;width:2000px;text-align:center;">Area</div>
<div class="a" style="left:1655px;top:606px;width:798px;height:505px;background:#414559;box-shadow:inset 0 0 46px rgba(95,128,150,.48)"></div>
<div class="t" style="top:616.17px;font-size:35px;color:#fff;font-weight:400;left:1665.00px;transform:scaleX(1.0475);transform-origin:0 0;">By Conservation Type</div>
<svg class="a" style="left:0;top:0" width="2992" height="1822"><path d="M1937.00,731.10 A152.3,152.3 0 1 1 1800.11,816.64 L1854.94,843.38 A91.3,91.3 0 1 0 1937.00,792.10Z" fill="#33309b"/><path d="M1800.11,816.64 A152.3,152.3 0 0 1 1876.76,743.52 L1900.89,799.55 A91.3,91.3 0 0 0 1854.94,843.38Z" fill="#9461a1"/><path d="M1876.76,743.52 A152.3,152.3 0 0 1 1937.00,731.10 L1937.00,792.10 A91.3,91.3 0 0 0 1900.89,799.55Z" fill="#9ed8da"/></svg>
<div class="t" style="top:754.14px;font-size:27px;color:#fff;font-weight:400;left:912.50px;width:2000px;text-align:center;">1M</div>
<div class="t" style="top:786.64px;font-size:27px;color:#fff;font-weight:400;left:853.00px;width:2000px;text-align:center;">1M</div>
<div class="t" style="top:976.14px;font-size:27px;color:#fff;font-weight:400;left:1002.00px;width:2000px;text-align:center;">10M</div>
<div class="t" style="top:793.94px;font-size:23.7px;color:#fff;font-weight:700;left:2207.30px;transform:scaleX(1.0052);transform-origin:0 0;">Conservation Type</div>
<div class="a" style="left:2207.3px;top:835.8px;width:23px;height:23px;border-radius:50%;background:#33309b"></div>
<div class="t" style="top:837.11px;font-size:23.5px;color:#fff;font-weight:400;left:2235.70px;transform:scaleX(0.9964);transform-origin:0 0;">High Carbon St...</div>
<div class="a" style="left:2207.3px;top:887.8px;width:23px;height:23px;border-radius:50%;background:#9461a1"></div>
<div class="t" style="top:889.11px;font-size:23.5px;color:#fff;font-weight:400;left:2235.70px;transform:scaleX(1.0011);transform-origin:0 0;">Others</div>
<div class="a" style="left:2207.3px;top:939.8px;width:23px;height:23px;border-radius:50%;background:#9ed8da"></div>
<div class="t" style="top:941.11px;font-size:23.5px;color:#fff;font-weight:400;left:2235.70px;transform:scaleX(0.9919);transform-origin:0 0;">High Conserva...</div>
<div class="a" style="left:1653px;top:1135px;width:806px;height:574px;background:#414559;box-shadow:inset 0 0 46px rgba(95,128,150,.48)"></div>
<div class="t" style="top:1145.37px;font-size:35px;color:#fff;font-weight:400;left:1663.00px;transform:scaleX(1.0387);transform-origin:0 0;">By Area Name</div>
<div class="a" style="left:2340.0px;top:1137px;width:34.6px;height:33px;background:#fff;"></div>
<div class="a" style="left:2381.2px;top:1137px;width:34.6px;height:33px;background:#fff;"></div>
<div class="a" style="left:2422.4px;top:1137px;width:34.6px;height:33px;background:#fff;"></div>
<svg class="a" style="left:2340px;top:1137px" width="118" height="33"><g fill="none" stroke="#555" stroke-width="1.4">
<path d="M8.5,10.5 H26 M11.5,15.5 H23 M15,20.5 H19.5"/>
<path d="M50,10 H57 V17 M57,10 L48.5,18.5 M54,21.5 V24 H45 V13 H48"/>
</g><g fill="#555"><circle cx="92" cy="16.5" r="1.4"/><circle cx="97" cy="16.5" r="1.4"/><circle cx="102" cy="16.5" r="1.4"/></g></svg>
<svg class="a" style="left:0;top:0" width="2992" height="1822"><path d="M1938.00,1280.20 A167.3,167.3 0 0 1 2094.91,1389.46 L2031.98,1412.74 A100.2,100.2 0 0 0 1938.00,1347.30Z" fill="#33309b"/><path d="M2094.91,1389.46 A167.3,167.3 0 0 1 2068.75,1551.88 L2016.31,1510.01 A100.2,100.2 0 0 0 2031.98,1412.74Z" fill="#9461a1"/><path d="M2068.75,1551.88 A167.3,167.3 0 0 1 1953.74,1614.06 L1947.43,1547.26 A100.2,100.2 0 0 0 2016.31,1510.01Z" fill="#9ed8da"/><path d="M1953.74,1614.06 A167.3,167.3 0 0 1 1870.22,1600.45 L1897.40,1539.11 A100.2,100.2 0 0 0 1947.43,1547.26Z" fill="#e06b62"/><path d="M1870.22,1600.45 A167.3,167.3 0 0 1 1818.67,1564.76 L1866.53,1517.73 A100.2,100.2 0 0 0 1897.40,1539.11Z" fill="#7cc4e6"/><path d="M1818.67,1564.76 A167.3,167.3 0 0 1 1786.75,1519.00 L1847.41,1490.32 A100.2,100.2 0 0 0 1866.53,1517.73Z" fill="#8fc156"/><path d="M1786.75,1519.00 A167.3,167.3 0 0 1 1771.95,1467.89 L1838.55,1459.71 A100.2,100.2 0 0 0 1847.41,1490.32Z" fill="#e68a44"/><path d="M1771.95,1467.89 A167.3,167.3 0 0 1 1772.76,1421.33 L1839.03,1431.83 A100.2,100.2 0 0 0 1838.55,1459.71Z" fill="#4a4760"/><path d="M1772.76,1421.33 A167.3,167.3 0 0 1 1786.50,1376.53 L1847.26,1405.00 A100.2,100.2 0 0 0 1839.03,1431.83Z" fill="#f5d77a"/><path d="M1786.50,1376.53 A167.3,167.3 0 0 1 1805.63,1345.19 L1858.72,1386.22 A100.2,100.2 0 0 0 1847.26,1405.00Z" fill="#a2275e"/><path d="M1805.63,1345.19 A167.3,167.3 0 0 1 1829.35,1320.28 L1872.93,1371.31 A100.2,100.2 0 0 0 1858.72,1386.22Z" fill="#7fcfb5"/><path d="M1829.35,1320.28 A167.3,167.3 0 0 1 1856.89,1301.18 L1889.42,1359.86 A100.2,100.2 0 0 0 1872.93,1371.31Z" fill="#8a6a5a"/><path d="M1856.89,1301.18 A167.3,167.3 0 0 1 1875.87,1292.16 L1900.79,1354.47 A100.2,100.2 0 0 0 1889.42,1359.86Z" fill="#e88b85"/><path d="M1875.87,1292.16 A167.3,167.3 0 0 1 1887.41,1288.03 L1907.70,1351.99 A100.2,100.2 0 0 0 1900.79,1354.47Z" fill="#f0d060"/><path d="M1887.41,1288.03 A167.3,167.3 0 0 1 1900.93,1284.36 L1915.80,1349.79 A100.2,100.2 0 0 0 1907.70,1351.99Z" fill="#7e8a8a"/><path d="M1900.93,1284.36 A167.3,167.3 0 0 1 1912.69,1282.12 L1922.84,1348.45 A100.2,100.2 0 0 0 1915.80,1349.79Z" fill="#a8d8ea"/><path d="M1912.69,1282.12 A167.3,167.3 0 0 1 1919.35,1281.24 L1926.83,1347.92 A100.2,100.2 0 0 0 1922.84,1348.45Z" fill="#e8a070"/><path d="M1919.35,1281.24 A167.3,167.3 0 0 1 1924.29,1280.76 L1929.79,1347.64 A100.2,100.2 0 0 0 1926.83,1347.92Z" fill="#a070b0"/><path d="M1924.29,1280.76 A167.3,167.3 0 0 1 1928.37,1280.48 L1932.23,1347.47 A100.2,100.2 0 0 0 1929.79,1347.64Z" fill="#6080a0"/><path d="M1928.37,1280.48 A167.3,167.3 0 0 1 1931.87,1280.31 L1934.33,1347.37 A100.2,100.2 0 0 0 1932.23,1347.47Z" fill="#50a0a0"/><path d="M1931.87,1280.31 A167.3,167.3 0 0 1 1934.50,1280.24 L1935.90,1347.32 A100.2,100.2 0 0 0 1934.33,1347.37Z" fill="#c09050"/><path d="M1934.50,1280.24 A167.3,167.3 0 0 1 1936.54,1280.21 L1937.13,1347.30 A100.2,100.2 0 0 0 1935.90,1347.32Z" fill="#607080"/><path d="M1936.54,1280.21 A167.3,167.3 0 0 1 1938.00,1280.20 L1938.00,1347.30 A100.2,100.2 0 0 0 1937.13,1347.30Z" fill="#304050"/><path d="M1825,1280 H1851.5 L1861.6,1295 M1875,1263 H1903.5 L1906.4,1278.8" fill="none" stroke="#5d5a54" stroke-width="1.4"/></svg>
<div class="t" style="top:1326.94px;font-size:27px;color:#fff;font-weight:400;left:1014.00px;width:2000px;text-align:center;">2M</div>
<div class="t" style="top:1457.14px;font-size:27px;color:#fff;font-weight:400;left:1070.00px;width:2000px;text-align:center;">2M</div>
<div class="t" style="top:1554.64px;font-size:27px;color:#fff;font-weight:400;left:1001.00px;width:2000px;text-align:center;">2M</div>
<div class="t" style="top:1569.64px;font-size:27px;color:#fff;font-weight:400;left:916.50px;width:2000px;text-align:center;">1M</div>
<div class="t" style="top:1547.74px;font-size:27px;color:#fff;font-weight:400;left:862.00px;width:2000px;text-align:center;">1M</div>
<div class="t" style="top:1523.14px;font-size:27px;color:#fff;font-weight:400;left:815.00px;width:2000px;text-align:center;">1M</div>
<div class="t" style="top:1474.54px;font-size:27px;color:#fff;font-weight:400;left:810.00px;width:2000px;text-align:center;">1M</div>
<div class="t" style="top:1433.84px;font-size:27px;color:#fff;font-weight:400;left:804.00px;width:2000px;text-align:center;">1M</div>
<div class="t" style="top:1397.14px;font-size:27px;color:#fff;font-weight:400;left:811.00px;width:2000px;text-align:center;">1M</div>
<div class="t" style="top:1357.14px;font-size:27px;color:#fff;font-weight:400;left:809.00px;width:2000px;text-align:center;">0M</div>
<div class="t" style="top:1356.14px;font-size:27px;color:#fff;font-weight:400;left:852.00px;width:2000px;text-align:center;">0M</div>
<div class="t" style="top:1314.74px;font-size:27px;color:#fff;font-weight:400;left:850.00px;width:2000px;text-align:center;">0M</div>
<div class="t" style="top:1311.84px;font-size:27px;color:#fff;font-weight:400;left:891.00px;width:2000px;text-align:center;">0M</div>
<div class="t" style="top:1303.74px;font-size:27px;color:#fff;font-weight:400;left:932.00px;width:2000px;text-align:center;">0M</div>
<div class="t" style="top:1268.74px;font-size:27px;color:#5d5a54;font-weight:400;left:796.60px;width:2000px;text-align:center;">0M</div>
<div class="t" style="top:1251.64px;font-size:27px;color:#5d5a54;font-weight:400;left:845.00px;width:2000px;text-align:center;">0M</div>
<div class="t" style="top:1201.74px;font-size:23.7px;color:#fff;font-weight:700;left:2211.40px;transform:scaleX(1.0255);transform-origin:0 0;">Area Name</div>
<div class="a" style="left:2212.1px;top:1244.1px;width:23px;height:23px;border-radius:50%;background:#33309b"></div>
<div class="t" style="top:1245.41px;font-size:23.5px;color:#fff;font-weight:400;left:2238.60px;transform:scaleX(0.963);transform-origin:0 0;">Lake Baikal</div>
<div class="a" style="left:2212.1px;top:1296.1999999999998px;width:23px;height:23px;border-radius:50%;background:#9461a1"></div>
<div class="t" style="top:1297.51px;font-size:23.5px;color:#fff;font-weight:400;left:2238.60px;transform:scaleX(1.0122);transform-origin:0 0;">Virgin Komi For...</div>
<div class="a" style="left:2212.1px;top:1348.3px;width:23px;height:23px;border-radius:50%;background:#9ed8da"></div>
<div class="t" style="top:1349.61px;font-size:23.5px;color:#fff;font-weight:400;left:2238.60px;transform:scaleX(1.0041);transform-origin:0 0;">Central Sikhote...</div>
<div class="a" style="left:2212.1px;top:1400.3999999999999px;width:23px;height:23px;border-radius:50%;background:#e06b62"></div>
<div class="t" style="top:1401.71px;font-size:23.5px;color:#fff;font-weight:400;left:2238.60px;transform:scaleX(1.0004);transform-origin:0 0;">Greater Blue M...</div>
<div class="a" style="left:2212.1px;top:1452.5px;width:23px;height:23px;border-radius:50%;background:#7cc4e6"></div>
<div class="t" style="top:1453.81px;font-size:23.5px;color:#fff;font-weight:400;left:2238.60px;transform:scaleX(1.0071);transform-origin:0 0;">Yellowstone Na...</div>
<div class="a" style="left:2212.1px;top:1504.6px;width:23px;height:23px;border-radius:50%;background:#8fc156"></div>
<div class="t" style="top:1505.91px;font-size:23.5px;color:#fff;font-weight:400;left:2238.60px;transform:scaleX(1.0129);transform-origin:0 0;">Kakadu Nation...</div>
<div class="a" style="left:2212.1px;top:1556.6999999999998px;width:23px;height:23px;border-radius:50%;background:#e68a44"></div>
<div class="t" style="top:1558.01px;font-size:23.5px;color:#fff;font-weight:400;left:2238.60px;transform:scaleX(0.9899);transform-origin:0 0;">Dong Phayaye...</div>
<div class="a" style="left:2212.1px;top:1608.8px;width:23px;height:23px;border-radius:50%;background:#4a4760"></div>
<div class="t" style="top:1610.11px;font-size:23.5px;color:#fff;font-weight:400;left:2238.60px;transform:scaleX(1.0021);transform-origin:0 0;">Putorana Plateau</div>
<svg class="a" style="left:2304px;top:1666px" width="54" height="32"><path d="M6,5.5 H49 L27.5,26.5Z" fill="#2a2a2a" stroke="#fff" stroke-width="3" stroke-linejoin="miter"/></svg>
<div class="a" style="left:2474px;top:247px;width:465px;height:372px;background:#414559;box-shadow:inset 0 0 46px rgba(95,128,150,.48)"></div>
<div class="t" style="top:252.90px;font-size:36.5px;color:#fff;font-weight:400;left:2486.00px;transform:scaleX(1.0711);transform-origin:0 0;">Year</div>
<div class="cb" style="left:2503.7px;top:312.0px"><svg width="31" height="31" style="position:absolute;left:-1px;top:-1px"><path d="M5.3,17 L12.6,24 L25,9.4" fill="none" stroke="#fff" stroke-width="1.9"/></svg></div>
<div class="t" style="top:315.26px;font-size:31px;color:#fff;font-weight:400;left:2553.70px;transform:scaleX(0.9277);transform-origin:0 0;">Select all</div>
<div class="cb" style="left:2503.7px;top:355.6px"><svg width="31" height="31" style="position:absolute;left:-1px;top:-1px"><path d="M5.3,17 L12.6,24 L25,9.4" fill="none" stroke="#fff" stroke-width="1.9"/></svg></div>
<div class="t" style="top:358.91px;font-size:31px;color:#fff;font-weight:400;left:2553.70px;transform:scaleX(0.9094);transform-origin:0 0;">(Blank)</div>
<div class="cb" style="left:2503.7px;top:399.3px"><svg width="31" height="31" style="position:absolute;left:-1px;top:-1px"><path d="M5.3,17 L12.6,24 L25,9.4" fill="none" stroke="#fff" stroke-width="1.9"/></svg></div>
<div class="t" style="top:402.56px;font-size:31px;color:#fff;font-weight:400;left:2553.70px;transform:scaleX(0.928);transform-origin:0 0;">2020</div>
<div class="cb" style="left:2503.7px;top:442.9px"><svg width="31" height="31" style="position:absolute;left:-1px;top:-1px"><path d="M5.3,17 L12.6,24 L25,9.4" fill="none" stroke="#fff" stroke-width="1.9"/></svg></div>
<div class="t" style="top:446.21px;font-size:31px;color:#fff;font-weight:400;left:2553.70px;transform:scaleX(0.899);transform-origin:0 0;">2021</div>
<div class="cb" style="left:2503.7px;top:486.6px"><svg width="31" height="31" style="position:absolute;left:-1px;top:-1px"><path d="M5.3,17 L12.6,24 L25,9.4" fill="none" stroke="#fff" stroke-width="1.9"/></svg></div>
<div class="t" style="top:489.86px;font-size:31px;color:#fff;font-weight:400;left:2553.70px;transform:scaleX(0.928);transform-origin:0 0;">2022</div>
<div class="cb" style="left:2503.7px;top:530.2px"><svg width="31" height="31" style="position:absolute;left:-1px;top:-1px"><path d="M5.3,17 L12.6,24 L25,9.4" fill="none" stroke="#fff" stroke-width="1.9"/></svg></div>
<div class="t" style="top:533.51px;font-size:31px;color:#fff;font-weight:400;left:2553.70px;transform:scaleX(0.9193);transform-origin:0 0;">2023</div>
<div class="cb" style="left:2503.7px;top:573.9px"><svg width="31" height="31" style="position:absolute;left:-1px;top:-1px"><path d="M5.3,17 L12.6,24 L25,9.4" fill="none" stroke="#fff" stroke-width="1.9"/></svg></div>
<div class="t" style="top:577.16px;font-size:31px;color:#fff;font-weight:400;left:2553.70px;transform:scaleX(0.928);transform-origin:0 0;">2024</div>
<div class="a" style="left:2474px;top:631px;width:468px;height:734px;background:#414559;box-shadow:inset 0 0 46px rgba(95,128,150,.48)"></div>
<div class="t" style="top:637.10px;font-size:36.5px;color:#fff;font-weight:400;left:2485.30px;transform:scaleX(1.105);transform-origin:0 0;">Area Name</div>
<div class="a" style="left:2912px;top:692px;width:18px;height:400px;background:#7a7d88;"></div>
<div class="cb" style="left:2504px;top:699.5px"><svg width="31" height="31" style="position:absolute;left:-1px;top:-1px"><path d="M5.3,17 L12.6,24 L25,9.4" fill="none" stroke="#fff" stroke-width="1.9"/></svg></div>
<div class="t" style="top:702.76px;font-size:31px;color:#fff;font-weight:400;left:2553.70px;transform:scaleX(0.9261);transform-origin:0 0;">Select all</div>
<div class="cb" style="left:2504px;top:743.3px"><svg width="31" height="31" style="position:absolute;left:-1px;top:-1px"><path d="M5.3,17 L12.6,24 L25,9.4" fill="none" stroke="#fff" stroke-width="1.9"/></svg></div>
<div class="t" style="top:746.56px;font-size:31px;color:#fff;font-weight:400;left:2553.70px;transform:scaleX(0.9135);transform-origin:0 0;">(Blank)</div>
<div class="cb" style="left:2504px;top:787.1px"><svg width="31" height="31" style="position:absolute;left:-1px;top:-1px"><path d="M5.3,17 L12.6,24 L25,9.4" fill="none" stroke="#fff" stroke-width="1.9"/></svg></div>
<div class="t" style="top:790.36px;font-size:31px;color:#fff;font-weight:400;left:2553.70px;transform:scaleX(0.9746);transform-origin:0 0;">Central Sikhote-Alin</div>
<div class="cb" style="left:2504px;top:830.9px"><svg width="31" height="31" style="position:absolute;left:-1px;top:-1px"><path d="M5.3,17 L12.6,24 L25,9.4" fill="none" stroke="#fff" stroke-width="1.9"/></svg></div>
<div class="t" style="top:834.16px;font-size:31px;color:#fff;font-weight:400;left:2553.70px;transform:scaleX(0.9425);transform-origin:0 0;">Dong Phayayen-Khao Yai ...</div>
<div class="cb" style="left:2504px;top:874.7px"><svg width="31" height="31" style="position:absolute;left:-1px;top:-1px"><path d="M5.3,17 L12.6,24 L25,9.4" fill="none" stroke="#fff" stroke-width="1.9"/></svg></div>
<div class="t" style="top:877.96px;font-size:31px;color:#fff;font-weight:400;left:2553.70px;transform:scaleX(0.9176);transform-origin:0 0;">Fraser Island</div>
<div class="cb" style="left:2504px;top:918.5px"><svg width="31" height="31" style="position:absolute;left:-1px;top:-1px"><path d="M5.3,17 L12.6,24 L25,9.4" fill="none" stroke="#fff" stroke-width="1.9"/></svg></div>
<div class="t" style="top:921.76px;font-size:31px;color:#fff;font-weight:400;left:2553.70px;transform:scaleX(0.9525);transform-origin:0 0;">Gondwana Rainforests of ...</div>
<div class="cb" style="left:2504px;top:962.3px"><svg width="31" height="31" style="position:absolute;left:-1px;top:-1px"><path d="M5.3,17 L12.6,24 L25,9.4" fill="none" stroke="#fff" stroke-width="1.9"/></svg></div>
<div class="t" style="top:965.56px;font-size:31px;color:#fff;font-weight:400;left:2553.70px;transform:scaleX(0.9619);transform-origin:0 0;">Great Smoky Mountains ...</div>
<div class="cb" style="left:2504px;top:1006.1px"><svg width="31" height="31" style="position:absolute;left:-1px;top:-1px"><path d="M5.3,17 L12.6,24 L25,9.4" fill="none" stroke="#fff" stroke-width="1.9"/></svg></div>
<div class="t" style="top:1009.36px;font-size:31px;color:#fff;font-weight:400;left:2553.70px;transform:scaleX(0.9611);transform-origin:0 0;">Greater Blue Mountains A...</div>
<div class="cb" style="left:2504px;top:1049.9px"><svg width="31" height="31" style="position:absolute;left:-1px;top:-1px"><path d="M5.3,17 L12.6,24 L25,9.4" fill="none" stroke="#fff" stroke-width="1.9"/></svg></div>
<div class="t" style="top:1053.16px;font-size:31px;color:#fff;font-weight:400;left:2553.70px;transform:scaleX(0.9847);transform-origin:0 0;">Gunung Mulu National Park</div>
<div class="cb" style="left:2504px;top:1093.7px"><svg width="31" height="31" style="position:absolute;left:-1px;top:-1px"><path d="M5.3,17 L12.6,24 L25,9.4" fill="none" stroke="#fff" stroke-width="1.9"/></svg></div>
<div class="t" style="top:1096.96px;font-size:31px;color:#fff;font-weight:400;left:2553.70px;transform:scaleX(0.9571);transform-origin:0 0;">Kakadu National Park</div>
<div class="cb" style="left:2504px;top:1137.5px"><svg width="31" height="31" style="position:absolute;left:-1px;top:-1px"><path d="M5.3,17 L12.6,24 L25,9.4" fill="none" stroke="#fff" stroke-width="1.9"/></svg></div>
<div class="t" style="top:1140.76px;font-size:31px;color:#fff;font-weight:400;left:2553.70px;transform:scaleX(0.9326);transform-origin:0 0;">Kinabalu Park</div>
<div class="cb" style="left:2504px;top:1181.3px"><svg width="31" height="31" style="position:absolute;left:-1px;top:-1px"><path d="M5.3,17 L12.6,24 L25,9.4" fill="none" stroke="#fff" stroke-width="1.9"/></svg></div>
<div class="t" style="top:1184.56px;font-size:31px;color:#fff;font-weight:400;left:2553.70px;transform:scaleX(0.9047);transform-origin:0 0;">Lake Baikal</div>
<div class="cb" style="left:2504px;top:1225.1px"><svg width="31" height="31" style="position:absolute;left:-1px;top:-1px"><path d="M5.3,17 L12.6,24 L25,9.4" fill="none" stroke="#fff" stroke-width="1.9"/></svg></div>
<div class="t" style="top:1228.36px;font-size:31px;color:#fff;font-weight:400;left:2553.70px;transform:scaleX(0.9692);transform-origin:0 0;">Manas Wildlife Sanctuary</div>
<div class="cb" style="left:2504px;top:1268.9px"><svg width="31" height="31" style="position:absolute;left:-1px;top:-1px"><path d="M5.3,17 L12.6,24 L25,9.4" fill="none" stroke="#fff" stroke-width="1.9"/></svg></div>
<div class="t" style="top:1272.16px;font-size:31px;color:#fff;font-weight:400;left:2553.70px;transform:scaleX(0.9608);transform-origin:0 0;">Nanda Devi and Valley of ...</div>
<div class="cb" style="left:2504px;top:1312.7px"><svg width="31" height="31" style="position:absolute;left:-1px;top:-1px"><path d="M5.3,17 L12.6,24 L25,9.4" fill="none" stroke="#fff" stroke-width="1.9"/></svg></div>
<div class="t" style="top:1315.96px;font-size:31px;color:#fff;font-weight:400;left:2553.70px;transform:scaleX(0.975);transform-origin:0 0;">Olympic National Park</div>
<div class="a" style="left:2480px;top:1381px;width:463px;height:328px;background:#414559;box-shadow:inset 0 0 46px rgba(95,128,150,.48)"></div>
<div class="t" style="top:1386.80px;font-size:36.5px;color:#fff;font-weight:400;left:2491.50px;transform:scaleX(1.1163);transform-origin:0 0;">Conservation Type</div>
<div class="cb" style="left:2509.4px;top:1450.0px"><svg width="31" height="31" style="position:absolute;left:-1px;top:-1px"><path d="M5.3,17 L12.6,24 L25,9.4" fill="none" stroke="#fff" stroke-width="1.9"/></svg></div>
<div class="t" style="top:1453.26px;font-size:31px;color:#fff;font-weight:400;left:2559.00px;transform:scaleX(0.9333);transform-origin:0 0;">Select all</div>
<div class="cb" style="left:2509.4px;top:1493.7px"><svg width="31" height="31" style="position:absolute;left:-1px;top:-1px"><path d="M5.3,17 L12.6,24 L25,9.4" fill="none" stroke="#fff" stroke-width="1.9"/></svg></div>
<div class="t" style="top:1496.96px;font-size:31px;color:#fff;font-weight:400;left:2559.00px;transform:scaleX(0.9135);transform-origin:0 0;">(Blank)</div>
<div class="cb" style="left:2509.4px;top:1537.4px"><svg width="31" height="31" style="position:absolute;left:-1px;top:-1px"><path d="M5.3,17 L12.6,24 L25,9.4" fill="none" stroke="#fff" stroke-width="1.9"/></svg></div>
<div class="t" style="top:1540.66px;font-size:31px;color:#fff;font-weight:400;left:2559.00px;transform:scaleX(0.9647);transform-origin:0 0;">High Carbon Stock</div>
<div class="cb" style="left:2509.4px;top:1581.1px"><svg width="31" height="31" style="position:absolute;left:-1px;top:-1px"><path d="M5.3,17 L12.6,24 L25,9.4" fill="none" stroke="#fff" stroke-width="1.9"/></svg></div>
<div class="t" style="top:1584.36px;font-size:31px;color:#fff;font-weight:400;left:2559.00px;transform:scaleX(0.9717);transform-origin:0 0;">High Conservation Value</div>
<div class="cb" style="left:2509.4px;top:1624.8px"><svg width="31" height="31" style="position:absolute;left:-1px;top:-1px"><path d="M5.3,17 L12.6,24 L25,9.4" fill="none" stroke="#fff" stroke-width="1.9"/></svg></div>
<div class="t" style="top:1628.06px;font-size:31px;color:#fff;font-weight:400;left:2559.00px;transform:scaleX(0.9567);transform-origin:0 0;">Others</div>
</body></html>
